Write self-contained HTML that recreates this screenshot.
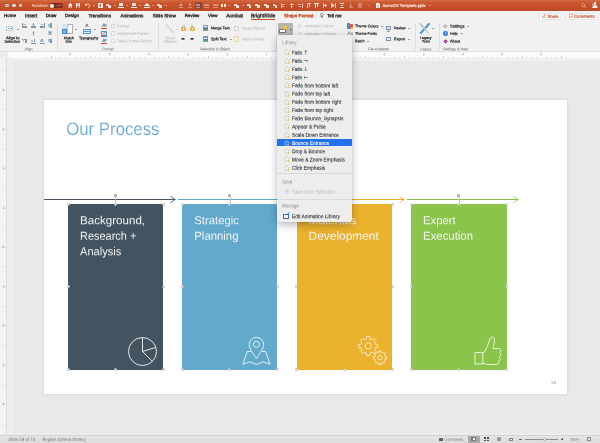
<!DOCTYPE html>
<html><head><meta charset="utf-8"><title>PowerPoint</title>
<style>
html,body{margin:0;padding:0;}
body{width:600px;height:443px;overflow:hidden;position:relative;background:#e7e7e7;font-family:"Liberation Sans",sans-serif;}
.tx{position:absolute;overflow:visible;will-change:transform;text-rendering:geometricPrecision;font-family:"Liberation Sans",sans-serif;}
.tx text{white-space:pre;}
.r{position:absolute;display:block;box-sizing:border-box;}
</style></head><body>
<div class="r" style="left:0.00px;top:0.00px;width:600.00px;height:10.60px;background:linear-gradient(#d46c44 0%,#ca552d 28%,#be4927 100%);"></div>
<div class="r" style="left:0.00px;top:10.60px;width:600.00px;height:40.80px;background:#f1f1f1;"></div>
<div class="r" style="left:0.00px;top:10.60px;width:600.00px;height:1.00px;background:#f8f8f8;"></div>
<div class="r" style="left:0.00px;top:51.10px;width:600.00px;height:0.70px;background:#e0e0e0;"></div>
<div class="r" style="left:0.00px;top:51.80px;width:600.00px;height:6.20px;background:#ededed;"></div>
<div class="r" style="left:7.80px;top:52.40px;width:592.20px;height:5.60px;background:#fbfbfb;"></div>
<div class="r" style="left:0.00px;top:58.00px;width:7.20px;height:376.00px;background:#f3f3f3;border-right:0.5px solid #dcdcdc;"></div>
<div class="r" style="left:7.20px;top:58.00px;width:592.80px;height:377.00px;background:#e9e9e9;"></div>
<div class="r" style="left:7.20px;top:58.00px;width:592.80px;height:2.60px;background:#f0f0f0;"></div>
<div class="r" style="left:7.20px;top:57.60px;width:6.20px;height:376.40px;background:#eeeeee;"></div>
<div class="r" style="left:0.00px;top:435.00px;width:600.00px;height:8.00px;background:linear-gradient(#e6e6e6,#dadada);border-top:0.6px solid #d2d2d2;"></div>
<div class="r" style="left:5.00px;top:3.60px;width:3.80px;height:3.80px;background:#dbe4ee;border-radius:38%;opacity:.92;"></div>
<div class="r" style="left:11.90px;top:3.60px;width:3.80px;height:3.80px;background:#d9e6e4;border-radius:38%;opacity:.92;"></div>
<div class="r" style="left:18.50px;top:3.60px;width:3.80px;height:3.80px;background:#d9e3ee;border-radius:38%;opacity:.92;"></div>
<div class="r" style="left:6.20px;top:4.80px;width:1.40px;height:1.40px;background:#6f8fb5;border-radius:50%;opacity:.8;"></div>
<svg class="tx" style="left:29px;top:0px" width="23" height="11"><text transform="translate(2.70 6.79) rotate(.05)" font-size="3.83" fill="#f7d6c9" stroke="#f7d6c9" stroke-width="0.08">AutoSave</text></svg>
<div class="r" style="left:50.00px;top:3.20px;width:13.30px;height:4.60px;background:#7d2a18;border-radius:2.3px;"></div>
<div class="r" style="left:50.40px;top:3.50px;width:4.00px;height:4.00px;background:#fff;border-radius:50%;"></div>
<svg class="tx" style="left:54px;top:1px" width="11" height="9"><text transform="translate(2.60 5.38) rotate(.05)" font-size="2.50" fill="#d9a493">OFF</text></svg>
<svg class="r" style="left:68.30px;top:3.00px;" width="4.40" height="4.80" viewBox="0 0 44 48"><path d="M22 0 L44 20 L38 20 L38 48 L27 48 L27 30 L17 30 L17 48 L6 48 L6 20 L0 20Z" fill="#fff"/></svg>
<svg class="r" style="left:75.80px;top:3.20px;" width="4.40" height="4.60" viewBox="0 0 44 46"><path d="M0 0H36L44 8V46H0Z M8 4V16H32V4Z M10 28V42H34V28Z" fill="#fff" fill-rule="evenodd"/></svg>
<svg class="r" style="left:84.80px;top:3.00px;" width="5.60" height="5.00" viewBox="0 0 56 50"><path d="M2 4V26H24Z" fill="#fdeee8"/><path d="M10 20C20 8 40 8 46 22C50 34 42 44 30 46" fill="none" stroke="#fdeee8" stroke-width="8"/></svg>
<div class="r" style="left:92.55px;top:5.42px;width:0;height:0;border-left:0.75px solid transparent;border-right:0.75px solid transparent;border-top:0.90px solid #f6d2c6;"></div>
<div class="r" style="left:97.50px;top:3.20px;width:5.00px;height:4.80px;background:#fdeee8;opacity:1.0;border-radius:.6px;"></div>
<div class="r" style="left:99.60px;top:4.20px;width:0.80px;height:2.80px;background:#c4532f;"></div>
<div class="r" style="left:98.60px;top:5.20px;width:2.80px;height:0.80px;background:#c4532f;"></div>
<div class="r" style="left:106.00px;top:3.50px;width:3.34px;height:2.70px;background:#fdeee8;opacity:0.92;border-radius:.5px;"></div>
<div class="r" style="left:108.28px;top:5.30px;width:3.22px;height:2.50px;background:#fdeee8;opacity:0.92;border-radius:.5px;"></div>
<div class="r" style="left:113.95px;top:5.42px;width:0;height:0;border-left:0.75px solid transparent;border-right:0.75px solid transparent;border-top:0.90px solid #f6d2c6;"></div>
<div class="r" style="left:119.30px;top:3.20px;width:3.90px;height:2.80px;background:#fdeee8;opacity:1.0;border-radius:1px 1px 0 0;"></div>
<div class="r" style="left:118.30px;top:6.80px;width:5.90px;height:1.20px;background:#fdeee8;opacity:1.0;"></div>
<div class="r" style="left:126.25px;top:5.42px;width:0;height:0;border-left:0.75px solid transparent;border-right:0.75px solid transparent;border-top:0.90px solid #f6d2c6;"></div>
<div class="r" style="left:131.80px;top:3.20px;width:3.90px;height:2.80px;background:#fdeee8;opacity:0.95;border-radius:1px 1px 0 0;"></div>
<div class="r" style="left:130.80px;top:6.80px;width:5.90px;height:1.20px;background:#fdeee8;opacity:0.95;"></div>
<div class="r" style="left:139.25px;top:5.42px;width:0;height:0;border-left:0.75px solid transparent;border-right:0.75px solid transparent;border-top:0.90px solid #f6d2c6;"></div>
<div class="r" style="left:144px;top:3.2px;width:0;height:0;border-left:3.0px solid transparent;border-right:3.0px solid transparent;border-bottom:3.8px solid #fff;opacity:1.0;"></div>
<div class="r" style="left:144.00px;top:7.00px;width:6.00px;height:1.00px;background:#fdeee8;opacity:1.0;"></div>
<div class="r" style="left:152.25px;top:5.42px;width:0;height:0;border-left:0.75px solid transparent;border-right:0.75px solid transparent;border-top:0.90px solid #f6d2c6;"></div>
<div class="r" style="left:156.90px;top:3.50px;width:3.28px;height:2.70px;background:#fdeee8;opacity:0.92;border-radius:.5px;"></div>
<div class="r" style="left:159.14px;top:5.30px;width:3.16px;height:2.50px;background:#fdeee8;opacity:0.92;border-radius:.5px;"></div>
<div class="r" style="left:165.05px;top:5.42px;width:0;height:0;border-left:0.75px solid transparent;border-right:0.75px solid transparent;border-top:0.90px solid #f6d2c6;"></div>
<div class="r" style="left:179px;top:3.2px;width:0;height:0;border-left:2.1500000000000057px solid transparent;border-right:2.1500000000000057px solid transparent;border-bottom:3.8px solid #fff;opacity:0.45;"></div>
<div class="r" style="left:179.00px;top:7.00px;width:4.30px;height:1.00px;background:#fdeee8;opacity:0.45;"></div>
<div class="r" style="left:188.50px;top:3.20px;width:2.20px;height:2.80px;background:#fdeee8;opacity:0.4;border-radius:1px 1px 0 0;"></div>
<div class="r" style="left:187.50px;top:6.80px;width:4.20px;height:1.20px;background:#fdeee8;opacity:0.4;"></div>
<div class="r" style="left:194.70px;top:1.70px;width:7.00px;height:6.90px;background:#87483a;border-radius:.6px;"></div>
<div class="r" style="left:196.00px;top:3.50px;width:4.40px;height:0.80px;background:#fdeee8;opacity:0.45;"></div>
<div class="r" style="left:196.00px;top:5.20px;width:4.40px;height:0.80px;background:#fdeee8;opacity:0.45;"></div>
<div class="r" style="left:196.00px;top:6.90px;width:4.40px;height:0.80px;background:#fdeee8;opacity:0.45;"></div>
<div class="r" style="left:204.00px;top:3.50px;width:5.00px;height:0.80px;background:#fdeee8;opacity:0.4;"></div>
<div class="r" style="left:204.00px;top:5.20px;width:5.00px;height:0.80px;background:#fdeee8;opacity:0.4;"></div>
<div class="r" style="left:204.00px;top:6.90px;width:5.00px;height:0.80px;background:#fdeee8;opacity:0.4;"></div>
<div class="r" style="left:212.50px;top:3.50px;width:5.00px;height:0.80px;background:#fdeee8;opacity:0.4;"></div>
<div class="r" style="left:212.50px;top:5.20px;width:5.00px;height:0.80px;background:#fdeee8;opacity:0.4;"></div>
<div class="r" style="left:212.50px;top:6.90px;width:5.00px;height:0.80px;background:#fdeee8;opacity:0.4;"></div>
<div class="r" style="left:220.80px;top:4.00px;width:2.10px;height:3.20px;background:#fdeee8;"></div>
<div class="r" style="left:223.70px;top:4.00px;width:2.10px;height:3.20px;background:#fdeee8;"></div>
<div class="r" style="left:228.25px;top:5.42px;width:0;height:0;border-left:0.75px solid transparent;border-right:0.75px solid transparent;border-top:0.90px solid #f6d2c6;"></div>
<div class="r" style="left:234.20px;top:3.50px;width:2.80px;height:2.70px;background:#fdeee8;opacity:0.92;border-radius:.5px;"></div>
<div class="r" style="left:236.10px;top:5.30px;width:2.70px;height:2.50px;background:#fdeee8;opacity:0.92;border-radius:.5px;"></div>
<div class="r" style="left:241.75px;top:5.42px;width:0;height:0;border-left:0.75px solid transparent;border-right:0.75px solid transparent;border-top:0.90px solid #f6d2c6;"></div>
<div class="r" style="left:246.90px;top:3.50px;width:2.80px;height:2.70px;background:#fdeee8;opacity:0.92;border-radius:.5px;"></div>
<div class="r" style="left:248.80px;top:5.30px;width:2.70px;height:2.50px;background:#fdeee8;opacity:0.92;border-radius:.5px;"></div>
<div class="r" style="left:255.20px;top:3.50px;width:2.80px;height:2.70px;background:#fdeee8;opacity:0.92;border-radius:.5px;"></div>
<div class="r" style="left:257.10px;top:5.30px;width:2.70px;height:2.50px;background:#fdeee8;opacity:0.92;border-radius:.5px;"></div>
<div class="r" style="left:263.70px;top:3.50px;width:2.98px;height:2.70px;background:#fdeee8;opacity:0.92;border-radius:.5px;"></div>
<div class="r" style="left:265.73px;top:5.30px;width:2.87px;height:2.50px;background:#fdeee8;opacity:0.92;border-radius:.5px;"></div>
<div class="r" style="left:272.70px;top:3.50px;width:2.80px;height:2.70px;background:#fdeee8;opacity:0.92;border-radius:.5px;"></div>
<div class="r" style="left:274.60px;top:5.30px;width:2.70px;height:2.50px;background:#fdeee8;opacity:0.92;border-radius:.5px;"></div>
<div class="r" style="left:281.00px;top:3.30px;width:0.70px;height:4.60px;background:#fdeee8;opacity:0.6;"></div>
<div class="r" style="left:282.10px;top:3.90px;width:3.10px;height:1.30px;background:#fdeee8;opacity:0.6;"></div>
<div class="r" style="left:282.10px;top:6.00px;width:1.90px;height:1.30px;background:#fdeee8;opacity:0.6;"></div>
<div class="r" style="left:291.45px;top:3.30px;width:0.70px;height:4.60px;background:#fdeee8;opacity:0.6;"></div>
<div class="r" style="left:289.60px;top:3.90px;width:4.40px;height:1.30px;background:#fdeee8;opacity:0.6;"></div>
<div class="r" style="left:290.50px;top:6.00px;width:2.60px;height:1.30px;background:#fdeee8;opacity:0.6;"></div>
<div class="r" style="left:301.50px;top:3.30px;width:0.70px;height:4.60px;background:#fdeee8;opacity:0.65;"></div>
<div class="r" style="left:298.00px;top:3.90px;width:3.10px;height:1.30px;background:#fdeee8;opacity:0.65;"></div>
<div class="r" style="left:299.20px;top:6.00px;width:1.90px;height:1.30px;background:#fdeee8;opacity:0.65;"></div>
<div class="r" style="left:306.50px;top:3.30px;width:4.50px;height:0.70px;background:#fdeee8;opacity:0.7;"></div>
<div class="r" style="left:307.00px;top:4.40px;width:1.30px;height:3.50px;background:#fdeee8;opacity:0.7;"></div>
<div class="r" style="left:309.20px;top:4.40px;width:1.30px;height:2.20px;background:#fdeee8;opacity:0.7;"></div>
<div class="r" style="left:314.00px;top:3.30px;width:5.00px;height:0.70px;background:#fdeee8;opacity:0.9;"></div>
<div class="r" style="left:314.50px;top:4.40px;width:1.30px;height:3.50px;background:#fdeee8;opacity:0.9;"></div>
<div class="r" style="left:317.20px;top:4.40px;width:1.30px;height:2.20px;background:#fdeee8;opacity:0.9;"></div>
<div class="r" style="left:322.50px;top:5.25px;width:4.50px;height:0.70px;background:#fdeee8;opacity:0.75;"></div>
<div class="r" style="left:323.00px;top:3.30px;width:1.30px;height:4.60px;background:#fdeee8;opacity:0.75;"></div>
<div class="r" style="left:325.20px;top:4.20px;width:1.30px;height:2.80px;background:#fdeee8;opacity:0.75;"></div>
<div class="r" style="left:331.00px;top:3.30px;width:0.60px;height:4.60px;background:#fdeee8;opacity:0.75;"></div>
<div class="r" style="left:334.80px;top:3.30px;width:0.60px;height:4.60px;background:#fdeee8;opacity:0.75;"></div>
<div class="r" style="left:332.40px;top:4.10px;width:1.60px;height:3.00px;background:#fdeee8;opacity:0.75;"></div>
<div class="r" style="left:339.80px;top:3.30px;width:4.40px;height:0.60px;background:#fdeee8;opacity:0.85;"></div>
<div class="r" style="left:339.80px;top:7.30px;width:4.40px;height:0.60px;background:#fdeee8;opacity:0.85;"></div>
<div class="r" style="left:340.60px;top:4.80px;width:2.80px;height:1.60px;background:#fdeee8;opacity:0.85;"></div>
<div class="r" style="left:349.00px;top:7.20px;width:4.00px;height:0.70px;background:#fdeee8;opacity:0.35;"></div>
<div class="r" style="left:349.50px;top:3.30px;width:1.30px;height:3.50px;background:#fdeee8;opacity:0.35;"></div>
<div class="r" style="left:351.20px;top:4.60px;width:1.30px;height:2.20px;background:#fdeee8;opacity:0.35;"></div>
<div class="r" style="left:357.50px;top:3.20px;width:4.20px;height:4.80px;background:#fdeee8;opacity:.3;"></div>
<div class="r" style="left:367.60px;top:5.20px;width:1.40px;height:1.20px;background:#f6d2c6;border-radius:50%;"></div>
<svg class="r" style="left:375.80px;top:2.60px;" width="4.20" height="5.60" viewBox="0 0 42 56"><path d="M0 0H28L42 14V56H0Z" fill="#fff"/><path d="M9 26H33M9 36H33M9 46H33" stroke="#c4532f" stroke-width="4"/></svg>
<svg class="tx" style="left:380px;top:0px" width="50" height="11"><text transform="translate(2.50 6.89) rotate(.05)" font-size="4.17" fill="#fdece5" stroke="#fdece5" stroke-width="0.16">AcmeSX Template.pptx</text></svg>
<div class="r" style="left:429.25px;top:5.42px;width:0;height:0;border-left:0.75px solid transparent;border-right:0.75px solid transparent;border-top:0.90px solid #f6d2c6;"></div>
<svg class="r" style="left:580.60px;top:2.80px;" width="5.40" height="5.40" viewBox="0 0 54 54"><circle cx="22" cy="22" r="16" fill="none" stroke="#f3c4b4" stroke-width="6"/><path d="M34 34L52 52" stroke="#f3c4b4" stroke-width="7"/></svg>
<svg class="r" style="left:592.00px;top:2.40px;" width="5.60" height="6.00" viewBox="0 0 56 60"><circle cx="30" cy="14" r="13" fill="#fff"/><path d="M4 60C4 38 16 30 30 30C44 30 56 38 56 60Z" fill="#fff"/><path d="M0 18L12 26L0 34Z" fill="#fff"/></svg>
<svg class="tx" style="left:2px;top:10px" width="19" height="12"><text transform="translate(2.00 7.09) rotate(.05)" font-size="4.50" fill="#2b2b2b" stroke="#2b2b2b" stroke-width="0.32">Home</text></svg>
<svg class="tx" style="left:23px;top:10px" width="19" height="12"><text transform="translate(2.00 7.24) rotate(.05)" font-size="4.96" fill="#2b2b2b" stroke="#2b2b2b" stroke-width="0.32">Insert</text></svg>
<svg class="tx" style="left:43px;top:10px" width="17" height="12"><text transform="translate(2.80 7.11) rotate(.05)" font-size="4.54" fill="#2b2b2b" stroke="#2b2b2b" stroke-width="0.32">Draw</text></svg>
<svg class="tx" style="left:63px;top:10px" width="20" height="12"><text transform="translate(2.00 7.09) rotate(.05)" font-size="4.50" fill="#2b2b2b" stroke="#2b2b2b" stroke-width="0.32">Design</text></svg>
<svg class="tx" style="left:86px;top:10px" width="29" height="12"><text transform="translate(2.40 7.14) rotate(.05)" font-size="4.66" fill="#2b2b2b" stroke="#2b2b2b" stroke-width="0.32">Transitions</text></svg>
<svg class="tx" style="left:118px;top:10px" width="29" height="12"><text transform="translate(2.50 7.14) rotate(.05)" font-size="4.63" fill="#2b2b2b" stroke="#2b2b2b" stroke-width="0.32">Animations</text></svg>
<svg class="tx" style="left:150px;top:10px" width="30" height="12"><text transform="translate(2.70 7.13) rotate(.05)" font-size="4.62" fill="#2b2b2b" stroke="#2b2b2b" stroke-width="0.32">Slide Show</text></svg>
<svg class="tx" style="left:182px;top:10px" width="21" height="12"><text transform="translate(2.70 7.09) rotate(.05)" font-size="4.48" fill="#2b2b2b" stroke="#2b2b2b" stroke-width="0.32">Review</text></svg>
<svg class="tx" style="left:206px;top:10px" width="16" height="12"><text transform="translate(2.00 7.04) rotate(.05)" font-size="4.33" fill="#2b2b2b" stroke="#2b2b2b" stroke-width="0.32">View</text></svg>
<svg class="tx" style="left:224px;top:10px" width="23" height="12"><text transform="translate(2.20 7.21) rotate(.05)" font-size="4.87" fill="#2b2b2b" stroke="#2b2b2b" stroke-width="0.32">Acrobat</text></svg>
<svg class="tx" style="left:249px;top:10px" width="31" height="13"><text transform="translate(2.00 7.26) rotate(.05)" font-size="5.02" fill="#2b2b2b" stroke="#2b2b2b" stroke-width="0.32">BrightSlide</text></svg>
<div class="r" style="left:251.00px;top:19.00px;width:24.30px;height:1.00px;background:#c8502c;"></div>
<svg class="tx" style="left:282px;top:10px" width="36" height="12"><text transform="translate(2.00 7.13) rotate(.05)" font-size="4.62" fill="#c4502c" stroke="#c4502c" stroke-width="0.32">Shape Format</text></svg>
<svg class="r" style="left:320.00px;top:12.80px;" width="3.60" height="5.40" viewBox="0 0 36 54"><circle cx="18" cy="17" r="14" fill="none" stroke="#444" stroke-width="5"/><path d="M11 30V42H25V30M12 50H24" fill="none" stroke="#444" stroke-width="5"/></svg>
<svg class="tx" style="left:325px;top:10px" width="21" height="12"><text transform="translate(2.00 7.14) rotate(.05)" font-size="4.64" fill="#2b2b2b" stroke="#2b2b2b" stroke-width="0.32">Tell me</text></svg>
<div class="r" style="left:539.20px;top:13.00px;width:21.40px;height:7.00px;background:#fbfbfb;border-radius:1.3px;border:.4px solid #e6e6e6;"></div>
<svg class="r" style="left:542.40px;top:14.40px;" width="3.60" height="4.00" viewBox="0 0 36 40"><path d="M4 18V38H30V24M14 26C14 14 22 8 32 8M24 0L34 8L24 16" fill="none" stroke="#c4502c" stroke-width="5"/></svg>
<svg class="tx" style="left:545px;top:11px" width="18" height="11"><text transform="translate(2.50 6.79) rotate(.05)" font-size="4.16" fill="#c4502c" stroke="#c4502c" stroke-width="0.2">Share</text></svg>
<div class="r" style="left:565.60px;top:13.00px;width:31.70px;height:7.00px;background:#fbfbfb;border-radius:1.3px;border:.4px solid #e6e6e6;"></div>
<svg class="r" style="left:568.60px;top:14.20px;" width="4.00" height="4.20" viewBox="0 0 40 42"><path d="M3 3H37V28H18L10 38V28H3Z" fill="none" stroke="#c4502c" stroke-width="5"/></svg>
<svg class="tx" style="left:572px;top:11px" width="27" height="11"><text transform="translate(2.00 6.82) rotate(.05)" font-size="4.26" fill="#c4502c" stroke="#c4502c" stroke-width="0.2">Comments</text></svg>
<div class="r" style="left:6.30px;top:26.20px;width:6.90px;height:4.60px;background:#fff;border:.4px solid #c9c9c9;border-radius:.5px;"></div>
<div class="r" style="left:7.60px;top:27.60px;width:1.90px;height:1.90px;background:#3f8fe0;"></div>
<div class="r" style="left:10.10px;top:27.60px;width:1.90px;height:1.90px;background:#3f8fe0;"></div>
<div class="r" style="left:17.20px;top:28.60px;width:0;height:0;border-left:0.80px solid transparent;border-right:0.80px solid transparent;border-top:0.96px solid #444;"></div>
<svg class="tx" style="left:4px;top:33px" width="20" height="11"><text transform="translate(2.00 6.25) rotate(.05)" font-size="4.05" fill="#2b2b2b" stroke="#2b2b2b" stroke-width="0.22">Align to</text></svg>
<svg class="tx" style="left:2px;top:36px" width="22" height="11"><text transform="translate(2.50 6.67) rotate(.05)" font-size="3.77" fill="#2b2b2b" stroke="#2b2b2b" stroke-width="0.22">Selection</text></svg>
<div class="r" style="left:22.31px;top:23.14px;width:0.53px;height:4.93px;background:#8d959d;"></div>
<div class="r" style="left:23.19px;top:23.66px;width:2.46px;height:1.58px;background:#9cc3e8;"></div>
<div class="r" style="left:23.19px;top:25.95px;width:3.70px;height:1.58px;background:#8d959d;"></div>
<div class="r" style="left:33.04px;top:23.14px;width:0.53px;height:4.93px;background:#8d959d;"></div>
<div class="r" style="left:31.89px;top:23.84px;width:2.82px;height:1.41px;background:#9cc3e8;"></div>
<div class="r" style="left:31.01px;top:25.95px;width:4.58px;height:1.58px;background:#8d959d;"></div>
<div class="r" style="left:43.96px;top:23.14px;width:0.53px;height:4.93px;background:#8d959d;"></div>
<div class="r" style="left:41.14px;top:23.66px;width:2.46px;height:1.58px;background:#9cc3e8;"></div>
<div class="r" style="left:39.91px;top:25.95px;width:3.70px;height:1.58px;background:#8d959d;"></div>
<div class="r" style="left:47.54px;top:25.34px;width:4.93px;height:0.53px;background:#8d959d;"></div>
<div class="r" style="left:48.24px;top:24.02px;width:1.50px;height:3.17px;background:#9cc3e8;"></div>
<div class="r" style="left:50.35px;top:23.31px;width:1.58px;height:4.58px;background:#8d959d;"></div>
<div class="r" style="left:32.07px;top:31.97px;width:2.46px;height:2.46px;background:transparent;border:.6px solid #9cc3e8;border-radius:50%;"></div>
<div class="r" style="left:33.04px;top:30.74px;width:0.53px;height:4.93px;background:#8d959d;opacity:.6;"></div>
<div class="r" style="left:47.71px;top:30.91px;width:1.94px;height:1.94px;background:#9cc3e8;"></div>
<div class="r" style="left:50.35px;top:30.91px;width:1.94px;height:1.94px;background:#9cc3e8;"></div>
<div class="r" style="left:47.71px;top:33.55px;width:1.94px;height:1.94px;background:#9cc3e8;"></div>
<div class="r" style="left:50.35px;top:33.55px;width:1.94px;height:1.94px;background:#9cc3e8;"></div>
<div class="r" style="left:48.94px;top:32.14px;width:2.11px;height:2.11px;background:#8d959d;"></div>
<div class="r" style="left:22.14px;top:38.51px;width:4.93px;height:0.53px;background:#8d959d;"></div>
<div class="r" style="left:22.66px;top:39.39px;width:1.58px;height:2.46px;background:#9cc3e8;"></div>
<div class="r" style="left:24.95px;top:39.39px;width:1.58px;height:3.70px;background:#8d959d;"></div>
<div class="r" style="left:30.84px;top:42.56px;width:4.93px;height:0.53px;background:#8d959d;"></div>
<div class="r" style="left:31.36px;top:39.74px;width:1.58px;height:2.46px;background:#9cc3e8;"></div>
<div class="r" style="left:33.65px;top:38.51px;width:1.58px;height:3.70px;background:#8d959d;"></div>
<div class="r" style="left:39.74px;top:42.56px;width:4.93px;height:0.53px;background:#8d959d;"></div>
<div class="r" style="left:41.14px;top:38.69px;width:2.11px;height:3.52px;background:#8d959d;"></div>
<div class="r" style="left:40.09px;top:40.45px;width:4.22px;height:1.76px;background:#9cc3e8;opacity:.8;"></div>
<div class="r" style="left:47.54px;top:38.51px;width:4.93px;height:0.53px;background:#8d959d;"></div>
<div class="r" style="left:48.06px;top:39.39px;width:1.58px;height:2.46px;background:#9cc3e8;"></div>
<div class="r" style="left:50.35px;top:39.39px;width:1.58px;height:3.70px;background:#8d959d;"></div>
<svg class="tx" style="left:22px;top:44px" width="14" height="11"><text transform="translate(2.50 6.32) rotate(.05)" font-size="3.60" fill="#7a7a7a" stroke="#7a7a7a" stroke-width="0.08">Align</text></svg>
<div class="r" style="left:57.25px;top:23.00px;width:0.50px;height:26.50px;background:#dedede;"></div>
<div class="r" style="left:61.80px;top:23.50px;width:11.20px;height:10.50px;background:#fbfbfb;border:.5px solid #a9aeb4;border-radius:.4px;"></div>
<div class="r" style="left:61.80px;top:28.60px;width:5.60px;height:5.40px;background:#4d9ae6;border:.4px solid #3b82cf;"></div>
<div class="r" style="left:63.20px;top:30.00px;width:2.80px;height:2.60px;background:#7fb6ee;"></div>
<div class="r" style="left:62.30px;top:24.00px;width:5.10px;height:4.60px;background:#d3e5f8;"></div>
<div class="r" style="left:67.40px;top:24.00px;width:0.50px;height:9.50px;background:#b9c4cf;"></div>
<div class="r" style="left:74.70px;top:28.60px;width:0;height:0;border-left:0.80px solid transparent;border-right:0.80px solid transparent;border-top:0.96px solid #444;"></div>
<svg class="tx" style="left:61px;top:33px" width="17" height="11"><text transform="translate(2.80 6.16) rotate(.05)" font-size="3.75" fill="#2b2b2b" stroke="#2b2b2b" stroke-width="0.22">Match</text></svg>
<svg class="tx" style="left:63px;top:37px" width="13" height="10"><text transform="translate(2.50 5.50) rotate(.05)" font-size="3.24" fill="#2b2b2b" stroke="#2b2b2b" stroke-width="0.22">Size</text></svg>
<svg class="tx" style="left:83px;top:20px" width="10" height="12"><text transform="translate(2.20 6.89) rotate(.05)" font-size="4.80" fill="#444" stroke="#444" stroke-width="0.1">A</text></svg>
<div class="r" style="left:83.00px;top:28.50px;width:8.00px;height:5.00px;background:#dcebfa;border:.5px solid #5b9bd9;"></div>
<div class="r" style="left:84.30px;top:30.60px;width:5.40px;height:0.80px;background:#5b9bd9;"></div>
<div class="r" style="left:94.20px;top:28.60px;width:0;height:0;border-left:0.80px solid transparent;border-right:0.80px solid transparent;border-top:0.96px solid #444;"></div>
<svg class="tx" style="left:77px;top:33px" width="26" height="11"><text transform="translate(2.00 6.16) rotate(.05)" font-size="3.73" fill="#2b2b2b" stroke="#2b2b2b" stroke-width="0.22">Typography</text></svg>
<svg class="tx" style="left:99px;top:19px" width="10" height="13"><text transform="translate(2.90 7.93) rotate(.05)" font-size="5.26" fill="#5a6470" font-weight="700">A</text></svg>
<div class="r" style="left:100.80px;top:27.90px;width:6.00px;height:1.20px;background:#d94c3d;"></div>
<div class="r" style="left:104.60px;top:23.60px;width:2.20px;height:2.20px;background:#5b9bd9;border-radius:50%;opacity:.85;"></div>
<svg class="tx" style="left:99px;top:34px" width="10" height="13"><text transform="translate(2.90 8.13) rotate(.05)" font-size="5.26" fill="#5a6470" font-weight="700">A</text></svg>
<div class="r" style="left:100.80px;top:43.10px;width:6.00px;height:1.20px;background:#d94c3d;"></div>
<div class="r" style="left:104.60px;top:38.80px;width:2.20px;height:2.20px;background:#5b9bd9;border-radius:50%;opacity:.85;"></div>
<div class="r" style="left:100.80px;top:31.20px;width:5.80px;height:5.60px;background:#cfe4f7;border:.5px solid #4f93d6;"></div>
<div class="r" style="left:102.00px;top:35.00px;width:4.00px;height:1.20px;background:#d94c3d;"></div>
<div class="r" style="left:102.60px;top:32.40px;width:4.20px;height:1.20px;background:#e0893a;transform:rotate(-42deg);"></div>
<div class="r" style="left:111.00px;top:23.90px;width:4.00px;height:4.60px;background:#f6f6f6;border:.4px solid #d9d9d9;border-radius:.4px;"></div>
<div class="r" style="left:111.00px;top:31.30px;width:4.00px;height:4.60px;background:#f6f6f6;border:.4px solid #d9d9d9;border-radius:.4px;"></div>
<div class="r" style="left:111.00px;top:38.90px;width:4.00px;height:4.60px;background:#f6f6f6;border:.4px solid #d9d9d9;border-radius:.4px;"></div>
<div class="r" style="left:112.60px;top:23.20px;width:2.80px;height:1.40px;background:#efdcb6;transform:rotate(-40deg);"></div>
<svg class="tx" style="left:115px;top:21px" width="18" height="11"><text transform="translate(2.00 6.37) rotate(.05)" font-size="3.79" fill="#ababab">Format</text></svg>
<svg class="tx" style="left:115px;top:28px" width="38" height="11"><text transform="translate(2.00 6.67) rotate(.05)" font-size="3.79" fill="#ababab">Adjustment Painter</text></svg>
<svg class="tx" style="left:115px;top:36px" width="41" height="11"><text transform="translate(2.00 6.17) rotate(.05)" font-size="3.77" fill="#ababab">Table Format Painter</text></svg>
<svg class="tx" style="left:100px;top:44px" width="18" height="11"><text transform="translate(2.00 6.33) rotate(.05)" font-size="3.63" fill="#7a7a7a" stroke="#7a7a7a" stroke-width="0.08">Format</text></svg>
<div class="r" style="left:157.75px;top:23.00px;width:0.50px;height:26.50px;background:#dedede;"></div>
<svg class="r" style="left:164.60px;top:23.80px;" width="9.40" height="9.60" viewBox="0 0 94 96"><path d="M14 10L84 88" stroke="#b4cfec" stroke-width="11" stroke-linecap="round"/><path d="M8 4L34 34" stroke="#dadada" stroke-width="15" stroke-linecap="round"/></svg>
<div class="r" style="left:175.50px;top:28.60px;width:0;height:0;border-left:0.80px solid transparent;border-right:0.80px solid transparent;border-top:0.96px solid #aaa;"></div>
<svg class="tx" style="left:163px;top:33px" width="17" height="11"><text transform="translate(2.00 6.17) rotate(.05)" font-size="3.78" fill="#ababab">Select</text></svg>
<svg class="tx" style="left:161px;top:36px" width="19" height="11"><text transform="translate(2.80 6.66) rotate(.05)" font-size="3.75" fill="#ababab">Objects</text></svg>
<div class="r" style="left:180.80px;top:27.40px;width:4.80px;height:3.80px;background:#f2b445;border-radius:.6px;"></div>
<div class="r" style="left:181.80px;top:24.60px;width:2.80px;height:3.60px;background:transparent;border:.7px solid #b7b7b7;border-bottom:none;border-radius:1.5px 1.5px 0 0;"></div>
<div class="r" style="left:182.80px;top:28.40px;width:0.80px;height:1.60px;background:#fbe2b0;"></div>
<div class="r" style="left:189.80px;top:27.40px;width:4.80px;height:3.80px;background:#f2b445;border-radius:.6px;"></div>
<div class="r" style="left:190.60px;top:24.60px;width:2.80px;height:3.60px;background:transparent;border:.7px solid #b7b7b7;border-bottom:none;border-radius:1.5px 1.5px 0 0;"></div>
<div class="r" style="left:191.80px;top:28.40px;width:0.80px;height:1.60px;background:#fbe2b0;"></div>
<div class="r" style="left:180.60px;top:37.60px;width:4.80px;height:2.20px;background:#666;border-radius:50%;"></div>
<div class="r" style="left:182.20px;top:37.90px;width:1.60px;height:1.60px;background:#222;border-radius:50%;"></div>
<div class="r" style="left:189.60px;top:37.60px;width:4.80px;height:2.20px;background:#666;border-radius:50%;"></div>
<div class="r" style="left:191.20px;top:37.90px;width:1.60px;height:1.60px;background:#222;border-radius:50%;"></div>
<div class="r" style="left:203.00px;top:25.40px;width:5.40px;height:5.80px;background:#f7f7f7;border:.4px solid #8a99a8;"></div>
<div class="r" style="left:203.80px;top:26.60px;width:3.80px;height:0.70px;background:#5b9bd9;"></div>
<div class="r" style="left:203.80px;top:28.00px;width:3.80px;height:0.70px;background:#6b7785;"></div>
<div class="r" style="left:203.80px;top:29.40px;width:3.80px;height:0.70px;background:#5aa35a;"></div>
<svg class="tx" style="left:209px;top:23px" width="25" height="11"><text transform="translate(2.00 6.36) rotate(.05)" font-size="3.75" fill="#2b2b2b" stroke="#2b2b2b" stroke-width="0.22">Merge Text</text></svg>
<div class="r" style="left:203.00px;top:36.00px;width:5.40px;height:5.80px;background:#f7f7f7;border:.4px solid #8a99a8;"></div>
<div class="r" style="left:203.80px;top:37.20px;width:3.80px;height:0.70px;background:#5b9bd9;"></div>
<div class="r" style="left:203.80px;top:38.60px;width:3.80px;height:0.70px;background:#6b7785;"></div>
<div class="r" style="left:203.80px;top:40.00px;width:3.80px;height:0.70px;background:#5aa35a;"></div>
<svg class="tx" style="left:209px;top:34px" width="22" height="11"><text transform="translate(2.00 6.19) rotate(.05)" font-size="3.84" fill="#2b2b2b" stroke="#2b2b2b" stroke-width="0.22">Split Text</text></svg>
<div class="r" style="left:229.50px;top:38.90px;width:0;height:0;border-left:0.80px solid transparent;border-right:0.80px solid transparent;border-top:0.96px solid #444;"></div>
<div class="r" style="left:234.00px;top:25.80px;width:5.00px;height:5.20px;background:#f3f3f3;border:.4px solid #d6d6d6;"></div>
<svg class="tx" style="left:240px;top:23px" width="30" height="11"><text transform="translate(2.00 6.38) rotate(.05)" font-size="3.81" fill="#ababab">Swap Objects</text></svg>
<div class="r" style="left:234.00px;top:36.40px;width:5.00px;height:5.20px;background:#f6eedc;border:.4px solid #e2d6bb;"></div>
<svg class="tx" style="left:240px;top:34px" width="28" height="11"><text transform="translate(2.00 6.15) rotate(.05)" font-size="3.70" fill="#ababab">Add to Group</text></svg>
<svg class="tx" style="left:198px;top:44px" width="36" height="11"><text transform="translate(2.00 6.33) rotate(.05)" font-size="3.65" fill="#7a7a7a" stroke="#7a7a7a" stroke-width="0.08">Selection &amp; Object</text></svg>
<div class="r" style="left:276.05px;top:23.00px;width:0.50px;height:26.50px;background:#dedede;"></div>
<div class="r" style="left:277.50px;top:22.80px;width:15.50px;height:12.00px;background:#b5b5b5;border-radius:.6px;"></div>
<div class="r" style="left:279.00px;top:28.80px;width:7.00px;height:4.60px;background:#fdfdfd;border:.4px solid #777;"></div>
<svg class="r" style="left:281.60px;top:23.60px;" width="6.40" height="6.40" viewBox="0 0 64 64"><path d="M32 2L41 22L62 25L46 40L51 62L32 50L13 62L18 40L2 25L23 22Z" fill="#f7c948" stroke="#d99a1c" stroke-width="4"/></svg>
<div class="r" style="left:290.00px;top:28.60px;width:0;height:0;border-left:0.80px solid transparent;border-right:0.80px solid transparent;border-top:0.96px solid #333;"></div>
<div class="r" style="left:297.60px;top:24.00px;width:3.00px;height:3.60px;background:#f1ead8;border:.3px solid #ddd;"></div>
<svg class="tx" style="left:302px;top:21px" width="36" height="11"><text transform="translate(2.70 6.15) rotate(.05)" font-size="3.71" fill="#ababab">Animation Painter</text></svg>
<div class="r" style="left:297.60px;top:32.00px;width:3.00px;height:3.40px;background:#ebebeb;border:.3px solid #ddd;"></div>
<svg class="tx" style="left:302px;top:29px" width="38" height="11"><text transform="translate(2.70 5.96) rotate(.05)" font-size="3.73" fill="#ababab">Animation Painters</text></svg>
<div class="r" style="left:347.00px;top:23.20px;width:3.20px;height:5.80px;background:#3f8fe0;border-radius:.6px;"></div>
<div class="r" style="left:349.80px;top:24.00px;width:3.20px;height:5.00px;background:#e4573f;border-radius:.6px;"></div>
<div class="r" style="left:350.60px;top:26.60px;width:2.40px;height:2.40px;background:#f2b632;border-radius:.5px;"></div>
<svg class="tx" style="left:353px;top:21px" width="30" height="11"><text transform="translate(2.00 6.36) rotate(.05)" font-size="3.74" fill="#2b2b2b" stroke="#2b2b2b" stroke-width="0.22">Theme Colors</text></svg>
<div class="r" style="left:381.20px;top:26.10px;width:0;height:0;border-left:0.80px solid transparent;border-right:0.80px solid transparent;border-top:0.96px solid #444;"></div>
<svg class="tx" style="left:345px;top:28px" width="12" height="12"><text transform="translate(2.40 6.82) rotate(.05)" font-size="4.58" fill="#777" stroke="#777" stroke-width="0.1">Aa</text></svg>
<svg class="tx" style="left:353px;top:28px" width="28" height="11"><text transform="translate(2.00 6.66) rotate(.05)" font-size="3.73" fill="#2b2b2b" stroke="#2b2b2b" stroke-width="0.22">Theme Fonts</text></svg>
<svg class="tx" style="left:353px;top:36px" width="16" height="11"><text transform="translate(2.00 6.15) rotate(.05)" font-size="3.72" fill="#2b2b2b" stroke="#2b2b2b" stroke-width="0.22">Batch</text></svg>
<div class="r" style="left:367.20px;top:40.90px;width:0;height:0;border-left:0.80px solid transparent;border-right:0.80px solid transparent;border-top:0.96px solid #444;"></div>
<div class="r" style="left:386.30px;top:25.50px;width:4.90px;height:4.10px;background:#e4eefa;border:.4px solid #7d93ad;"></div>
<div class="r" style="left:388.30px;top:29.60px;width:0.90px;height:1.20px;background:#8ea2b8;"></div>
<div class="r" style="left:387.40px;top:30.60px;width:2.70px;height:0.50px;background:#8ea2b8;"></div>
<svg class="tx" style="left:392px;top:23px" width="18" height="10"><text transform="translate(2.00 6.29) rotate(.05)" font-size="3.51" fill="#2b2b2b" stroke="#2b2b2b" stroke-width="0.22">Review</text></svg>
<div class="r" style="left:408.20px;top:28.10px;width:0;height:0;border-left:0.80px solid transparent;border-right:0.80px solid transparent;border-top:0.96px solid #444;"></div>
<div class="r" style="left:386.30px;top:36.60px;width:4.90px;height:4.00px;background:#e4eefa;border:.4px solid #7d93ad;"></div>
<svg class="tx" style="left:392px;top:34px" width="17" height="11"><text transform="translate(2.00 6.18) rotate(.05)" font-size="3.81" fill="#2b2b2b" stroke="#2b2b2b" stroke-width="0.22">Export</text></svg>
<div class="r" style="left:407.70px;top:38.90px;width:0;height:0;border-left:0.80px solid transparent;border-right:0.80px solid transparent;border-top:0.96px solid #444;"></div>
<svg class="tx" style="left:366px;top:44px" width="27" height="10"><text transform="translate(2.00 6.31) rotate(.05)" font-size="3.57" fill="#7a7a7a" stroke="#7a7a7a" stroke-width="0.08">File &amp; Master</text></svg>
<div class="r" style="left:414.75px;top:23.00px;width:0.50px;height:26.50px;background:#dedede;"></div>
<svg class="r" style="left:419.00px;top:23.00px;" width="11.40" height="11.20" viewBox="0 0 114 112"><path d="M100 10L18 100" stroke="#4a9be8" stroke-width="22" stroke-linecap="round"/><path d="M12 8L96 102" stroke="#c9ccd0" stroke-width="14" stroke-linecap="round"/><path d="M12 8L40 40" stroke="#9aa0a6" stroke-width="8" stroke-linecap="round"/></svg>
<div class="r" style="left:432.20px;top:28.20px;width:0;height:0;border-left:0.80px solid transparent;border-right:0.80px solid transparent;border-top:0.96px solid #444;"></div>
<svg class="tx" style="left:418px;top:33px" width="18" height="10"><text transform="translate(2.00 6.11) rotate(.05)" font-size="3.57" fill="#2b2b2b" stroke="#2b2b2b" stroke-width="0.22">Legacy</text></svg>
<svg class="tx" style="left:420px;top:37px" width="14" height="10"><text transform="translate(2.00 5.56) rotate(.05)" font-size="3.43" fill="#2b2b2b" stroke="#2b2b2b" stroke-width="0.22">Tools</text></svg>
<svg class="tx" style="left:418px;top:44px" width="17" height="10"><text transform="translate(2.50 6.26) rotate(.05)" font-size="3.41" fill="#7a7a7a" stroke="#7a7a7a" stroke-width="0.08">Legacy</text></svg>
<div class="r" style="left:438.75px;top:23.00px;width:0.50px;height:26.50px;background:#dedede;"></div>
<svg class="r" style="left:443.20px;top:23.80px;" width="4.60" height="4.60" viewBox="0 0 46 46"><circle cx="23" cy="23" r="15" fill="none" stroke="#8d8d8d" stroke-width="9" stroke-dasharray="7 4.8"/><circle cx="23" cy="23" r="12" fill="none" stroke="#8d8d8d" stroke-width="5"/></svg>
<svg class="tx" style="left:448px;top:21px" width="21" height="11"><text transform="translate(2.00 6.44) rotate(.05)" font-size="4.01" fill="#2b2b2b" stroke="#2b2b2b" stroke-width="0.22">Settings</text></svg>
<div class="r" style="left:466.70px;top:26.10px;width:0;height:0;border-left:0.80px solid transparent;border-right:0.80px solid transparent;border-top:0.96px solid #444;"></div>
<div class="r" style="left:443.30px;top:31.40px;width:4.40px;height:4.40px;background:#2f7fdb;border-radius:50%;"></div>
<svg class="tx" style="left:442px;top:29px" width="8" height="9"><text transform="translate(2.70 5.46) rotate(.05)" font-size="2.78" fill="#fff" font-weight="700">?</text></svg>
<svg class="tx" style="left:448px;top:28px" width="14" height="11"><text transform="translate(2.00 6.63) rotate(.05)" font-size="3.65" fill="#2b2b2b" stroke="#2b2b2b" stroke-width="0.22">Help</text></svg>
<div class="r" style="left:460.70px;top:33.40px;width:0;height:0;border-left:0.80px solid transparent;border-right:0.80px solid transparent;border-top:0.96px solid #444;"></div>
<div class="r" style="left:444.00px;top:39.60px;width:3.20px;height:3.20px;background:#8b2a7a;transform:rotate(45deg);"></div>
<div class="r" style="left:445.00px;top:40.60px;width:1.20px;height:1.20px;background:#f3d7ee;border-radius:50%;"></div>
<svg class="tx" style="left:448px;top:36px" width="16" height="11"><text transform="translate(2.00 6.39) rotate(.05)" font-size="3.83" fill="#2b2b2b" stroke="#2b2b2b" stroke-width="0.22">About</text></svg>
<svg class="tx" style="left:441px;top:44px" width="31" height="11"><text transform="translate(2.00 6.32) rotate(.05)" font-size="3.63" fill="#7a7a7a" stroke="#7a7a7a" stroke-width="0.08">Settings &amp; Help</text></svg>
<svg class="tx" style="left:67px;top:49px" width="8" height="10"><text transform="translate(2.50 6.19) rotate(.05)" font-size="3.20" fill="#7a7a7a">6</text></svg>
<svg class="tx" style="left:106px;top:49px" width="8" height="10"><text transform="translate(2.75 6.19) rotate(.05)" font-size="3.20" fill="#7a7a7a">5</text></svg>
<svg class="tx" style="left:145px;top:49px" width="8" height="10"><text transform="translate(3.00 6.19) rotate(.05)" font-size="3.20" fill="#7a7a7a">4</text></svg>
<svg class="tx" style="left:185px;top:49px" width="8" height="10"><text transform="translate(2.25 6.19) rotate(.05)" font-size="3.20" fill="#7a7a7a">3</text></svg>
<svg class="tx" style="left:224px;top:49px" width="8" height="10"><text transform="translate(2.50 6.19) rotate(.05)" font-size="3.20" fill="#7a7a7a">2</text></svg>
<svg class="tx" style="left:263px;top:49px" width="8" height="10"><text transform="translate(2.75 6.19) rotate(.05)" font-size="3.20" fill="#7a7a7a">1</text></svg>
<svg class="tx" style="left:303px;top:49px" width="8" height="10"><text transform="translate(2.00 6.19) rotate(.05)" font-size="3.20" fill="#7a7a7a">0</text></svg>
<svg class="tx" style="left:342px;top:49px" width="8" height="10"><text transform="translate(2.25 6.19) rotate(.05)" font-size="3.20" fill="#7a7a7a">1</text></svg>
<svg class="tx" style="left:381px;top:49px" width="8" height="10"><text transform="translate(2.50 6.19) rotate(.05)" font-size="3.20" fill="#7a7a7a">2</text></svg>
<svg class="tx" style="left:420px;top:49px" width="8" height="10"><text transform="translate(2.75 6.19) rotate(.05)" font-size="3.20" fill="#7a7a7a">3</text></svg>
<svg class="tx" style="left:460px;top:49px" width="8" height="10"><text transform="translate(2.00 6.19) rotate(.05)" font-size="3.20" fill="#7a7a7a">4</text></svg>
<svg class="tx" style="left:499px;top:49px" width="8" height="10"><text transform="translate(2.25 6.19) rotate(.05)" font-size="3.20" fill="#7a7a7a">5</text></svg>
<svg class="tx" style="left:538px;top:49px" width="8" height="10"><text transform="translate(2.50 6.19) rotate(.05)" font-size="3.20" fill="#7a7a7a">6</text></svg>
<div class="r" style="left:45.67px;top:56.80px;width:0.40px;height:0.80px;background:#cdcdcd;"></div>
<div class="r" style="left:50.57px;top:56.10px;width:0.40px;height:1.50px;background:#cdcdcd;"></div>
<div class="r" style="left:55.48px;top:56.80px;width:0.40px;height:0.80px;background:#cdcdcd;"></div>
<div class="r" style="left:60.39px;top:56.80px;width:0.40px;height:0.80px;background:#cdcdcd;"></div>
<div class="r" style="left:65.29px;top:56.80px;width:0.40px;height:0.80px;background:#cdcdcd;"></div>
<div class="r" style="left:75.11px;top:56.80px;width:0.40px;height:0.80px;background:#cdcdcd;"></div>
<div class="r" style="left:80.01px;top:56.80px;width:0.40px;height:0.80px;background:#cdcdcd;"></div>
<div class="r" style="left:84.92px;top:56.80px;width:0.40px;height:0.80px;background:#cdcdcd;"></div>
<div class="r" style="left:89.82px;top:56.10px;width:0.40px;height:1.50px;background:#cdcdcd;"></div>
<div class="r" style="left:94.73px;top:56.80px;width:0.40px;height:0.80px;background:#cdcdcd;"></div>
<div class="r" style="left:99.64px;top:56.80px;width:0.40px;height:0.80px;background:#cdcdcd;"></div>
<div class="r" style="left:104.54px;top:56.80px;width:0.40px;height:0.80px;background:#cdcdcd;"></div>
<div class="r" style="left:114.36px;top:56.80px;width:0.40px;height:0.80px;background:#cdcdcd;"></div>
<div class="r" style="left:119.26px;top:56.80px;width:0.40px;height:0.80px;background:#cdcdcd;"></div>
<div class="r" style="left:124.17px;top:56.80px;width:0.40px;height:0.80px;background:#cdcdcd;"></div>
<div class="r" style="left:129.07px;top:56.10px;width:0.40px;height:1.50px;background:#cdcdcd;"></div>
<div class="r" style="left:133.98px;top:56.80px;width:0.40px;height:0.80px;background:#cdcdcd;"></div>
<div class="r" style="left:138.89px;top:56.80px;width:0.40px;height:0.80px;background:#cdcdcd;"></div>
<div class="r" style="left:143.79px;top:56.80px;width:0.40px;height:0.80px;background:#cdcdcd;"></div>
<div class="r" style="left:153.61px;top:56.80px;width:0.40px;height:0.80px;background:#cdcdcd;"></div>
<div class="r" style="left:158.51px;top:56.80px;width:0.40px;height:0.80px;background:#cdcdcd;"></div>
<div class="r" style="left:163.42px;top:56.80px;width:0.40px;height:0.80px;background:#cdcdcd;"></div>
<div class="r" style="left:168.32px;top:56.10px;width:0.40px;height:1.50px;background:#cdcdcd;"></div>
<div class="r" style="left:173.23px;top:56.80px;width:0.40px;height:0.80px;background:#cdcdcd;"></div>
<div class="r" style="left:178.14px;top:56.80px;width:0.40px;height:0.80px;background:#cdcdcd;"></div>
<div class="r" style="left:183.04px;top:56.80px;width:0.40px;height:0.80px;background:#cdcdcd;"></div>
<div class="r" style="left:192.86px;top:56.80px;width:0.40px;height:0.80px;background:#cdcdcd;"></div>
<div class="r" style="left:197.76px;top:56.80px;width:0.40px;height:0.80px;background:#cdcdcd;"></div>
<div class="r" style="left:202.67px;top:56.80px;width:0.40px;height:0.80px;background:#cdcdcd;"></div>
<div class="r" style="left:207.57px;top:56.10px;width:0.40px;height:1.50px;background:#cdcdcd;"></div>
<div class="r" style="left:212.48px;top:56.80px;width:0.40px;height:0.80px;background:#cdcdcd;"></div>
<div class="r" style="left:217.39px;top:56.80px;width:0.40px;height:0.80px;background:#cdcdcd;"></div>
<div class="r" style="left:222.29px;top:56.80px;width:0.40px;height:0.80px;background:#cdcdcd;"></div>
<div class="r" style="left:232.11px;top:56.80px;width:0.40px;height:0.80px;background:#cdcdcd;"></div>
<div class="r" style="left:237.01px;top:56.80px;width:0.40px;height:0.80px;background:#cdcdcd;"></div>
<div class="r" style="left:241.92px;top:56.80px;width:0.40px;height:0.80px;background:#cdcdcd;"></div>
<div class="r" style="left:246.82px;top:56.10px;width:0.40px;height:1.50px;background:#cdcdcd;"></div>
<div class="r" style="left:251.73px;top:56.80px;width:0.40px;height:0.80px;background:#cdcdcd;"></div>
<div class="r" style="left:256.64px;top:56.80px;width:0.40px;height:0.80px;background:#cdcdcd;"></div>
<div class="r" style="left:261.54px;top:56.80px;width:0.40px;height:0.80px;background:#cdcdcd;"></div>
<div class="r" style="left:271.36px;top:56.80px;width:0.40px;height:0.80px;background:#cdcdcd;"></div>
<div class="r" style="left:276.26px;top:56.80px;width:0.40px;height:0.80px;background:#cdcdcd;"></div>
<div class="r" style="left:281.17px;top:56.80px;width:0.40px;height:0.80px;background:#cdcdcd;"></div>
<div class="r" style="left:286.07px;top:56.10px;width:0.40px;height:1.50px;background:#cdcdcd;"></div>
<div class="r" style="left:290.98px;top:56.80px;width:0.40px;height:0.80px;background:#cdcdcd;"></div>
<div class="r" style="left:295.89px;top:56.80px;width:0.40px;height:0.80px;background:#cdcdcd;"></div>
<div class="r" style="left:300.79px;top:56.80px;width:0.40px;height:0.80px;background:#cdcdcd;"></div>
<div class="r" style="left:310.61px;top:56.80px;width:0.40px;height:0.80px;background:#cdcdcd;"></div>
<div class="r" style="left:315.51px;top:56.80px;width:0.40px;height:0.80px;background:#cdcdcd;"></div>
<div class="r" style="left:320.42px;top:56.80px;width:0.40px;height:0.80px;background:#cdcdcd;"></div>
<div class="r" style="left:325.32px;top:56.10px;width:0.40px;height:1.50px;background:#cdcdcd;"></div>
<div class="r" style="left:330.23px;top:56.80px;width:0.40px;height:0.80px;background:#cdcdcd;"></div>
<div class="r" style="left:335.14px;top:56.80px;width:0.40px;height:0.80px;background:#cdcdcd;"></div>
<div class="r" style="left:340.04px;top:56.80px;width:0.40px;height:0.80px;background:#cdcdcd;"></div>
<div class="r" style="left:349.86px;top:56.80px;width:0.40px;height:0.80px;background:#cdcdcd;"></div>
<div class="r" style="left:354.76px;top:56.80px;width:0.40px;height:0.80px;background:#cdcdcd;"></div>
<div class="r" style="left:359.67px;top:56.80px;width:0.40px;height:0.80px;background:#cdcdcd;"></div>
<div class="r" style="left:364.57px;top:56.10px;width:0.40px;height:1.50px;background:#cdcdcd;"></div>
<div class="r" style="left:369.48px;top:56.80px;width:0.40px;height:0.80px;background:#cdcdcd;"></div>
<div class="r" style="left:374.39px;top:56.80px;width:0.40px;height:0.80px;background:#cdcdcd;"></div>
<div class="r" style="left:379.29px;top:56.80px;width:0.40px;height:0.80px;background:#cdcdcd;"></div>
<div class="r" style="left:389.11px;top:56.80px;width:0.40px;height:0.80px;background:#cdcdcd;"></div>
<div class="r" style="left:394.01px;top:56.80px;width:0.40px;height:0.80px;background:#cdcdcd;"></div>
<div class="r" style="left:398.92px;top:56.80px;width:0.40px;height:0.80px;background:#cdcdcd;"></div>
<div class="r" style="left:403.82px;top:56.10px;width:0.40px;height:1.50px;background:#cdcdcd;"></div>
<div class="r" style="left:408.73px;top:56.80px;width:0.40px;height:0.80px;background:#cdcdcd;"></div>
<div class="r" style="left:413.64px;top:56.80px;width:0.40px;height:0.80px;background:#cdcdcd;"></div>
<div class="r" style="left:418.54px;top:56.80px;width:0.40px;height:0.80px;background:#cdcdcd;"></div>
<div class="r" style="left:428.36px;top:56.80px;width:0.40px;height:0.80px;background:#cdcdcd;"></div>
<div class="r" style="left:433.26px;top:56.80px;width:0.40px;height:0.80px;background:#cdcdcd;"></div>
<div class="r" style="left:438.17px;top:56.80px;width:0.40px;height:0.80px;background:#cdcdcd;"></div>
<div class="r" style="left:443.07px;top:56.10px;width:0.40px;height:1.50px;background:#cdcdcd;"></div>
<div class="r" style="left:447.98px;top:56.80px;width:0.40px;height:0.80px;background:#cdcdcd;"></div>
<div class="r" style="left:452.89px;top:56.80px;width:0.40px;height:0.80px;background:#cdcdcd;"></div>
<div class="r" style="left:457.79px;top:56.80px;width:0.40px;height:0.80px;background:#cdcdcd;"></div>
<div class="r" style="left:467.61px;top:56.80px;width:0.40px;height:0.80px;background:#cdcdcd;"></div>
<div class="r" style="left:472.51px;top:56.80px;width:0.40px;height:0.80px;background:#cdcdcd;"></div>
<div class="r" style="left:477.42px;top:56.80px;width:0.40px;height:0.80px;background:#cdcdcd;"></div>
<div class="r" style="left:482.32px;top:56.10px;width:0.40px;height:1.50px;background:#cdcdcd;"></div>
<div class="r" style="left:487.23px;top:56.80px;width:0.40px;height:0.80px;background:#cdcdcd;"></div>
<div class="r" style="left:492.14px;top:56.80px;width:0.40px;height:0.80px;background:#cdcdcd;"></div>
<div class="r" style="left:497.04px;top:56.80px;width:0.40px;height:0.80px;background:#cdcdcd;"></div>
<div class="r" style="left:506.86px;top:56.80px;width:0.40px;height:0.80px;background:#cdcdcd;"></div>
<div class="r" style="left:511.76px;top:56.80px;width:0.40px;height:0.80px;background:#cdcdcd;"></div>
<div class="r" style="left:516.67px;top:56.80px;width:0.40px;height:0.80px;background:#cdcdcd;"></div>
<div class="r" style="left:521.57px;top:56.10px;width:0.40px;height:1.50px;background:#cdcdcd;"></div>
<div class="r" style="left:526.48px;top:56.80px;width:0.40px;height:0.80px;background:#cdcdcd;"></div>
<div class="r" style="left:531.39px;top:56.80px;width:0.40px;height:0.80px;background:#cdcdcd;"></div>
<div class="r" style="left:536.29px;top:56.80px;width:0.40px;height:0.80px;background:#cdcdcd;"></div>
<div class="r" style="left:546.11px;top:56.80px;width:0.40px;height:0.80px;background:#cdcdcd;"></div>
<div class="r" style="left:551.01px;top:56.80px;width:0.40px;height:0.80px;background:#cdcdcd;"></div>
<div class="r" style="left:555.92px;top:56.80px;width:0.40px;height:0.80px;background:#cdcdcd;"></div>
<div class="r" style="left:560.82px;top:56.10px;width:0.40px;height:1.50px;background:#cdcdcd;"></div>
<div class="r" style="left:565.73px;top:56.80px;width:0.40px;height:0.80px;background:#cdcdcd;"></div>
<svg class="tx" style="left:0px;top:85px" width="8" height="10"><text transform="translate(2.60 5.99) rotate(.05)" font-size="3.20" fill="#7a7a7a">4</text></svg>
<svg class="tx" style="left:0px;top:125px" width="8" height="10"><text transform="translate(2.60 5.24) rotate(.05)" font-size="3.20" fill="#7a7a7a">3</text></svg>
<svg class="tx" style="left:0px;top:164px" width="8" height="10"><text transform="translate(2.60 5.49) rotate(.05)" font-size="3.20" fill="#7a7a7a">2</text></svg>
<svg class="tx" style="left:0px;top:203px" width="8" height="10"><text transform="translate(2.60 5.74) rotate(.05)" font-size="3.20" fill="#7a7a7a">1</text></svg>
<svg class="tx" style="left:0px;top:242px" width="8" height="10"><text transform="translate(2.60 5.99) rotate(.05)" font-size="3.20" fill="#7a7a7a">0</text></svg>
<svg class="tx" style="left:0px;top:282px" width="8" height="10"><text transform="translate(2.60 5.24) rotate(.05)" font-size="3.20" fill="#7a7a7a">1</text></svg>
<svg class="tx" style="left:0px;top:321px" width="8" height="10"><text transform="translate(2.60 5.49) rotate(.05)" font-size="3.20" fill="#7a7a7a">2</text></svg>
<svg class="tx" style="left:0px;top:360px" width="8" height="10"><text transform="translate(2.60 5.74) rotate(.05)" font-size="3.20" fill="#7a7a7a">3</text></svg>
<svg class="tx" style="left:0px;top:399px" width="8" height="10"><text transform="translate(2.60 5.99) rotate(.05)" font-size="3.20" fill="#7a7a7a">4</text></svg>
<div class="r" style="left:5.60px;top:60.13px;width:1.20px;height:0.40px;background:#dcdcdc;"></div>
<div class="r" style="left:5.60px;top:65.04px;width:1.20px;height:0.40px;background:#dcdcdc;"></div>
<div class="r" style="left:4.40px;top:69.95px;width:2.40px;height:0.40px;background:#dcdcdc;"></div>
<div class="r" style="left:5.60px;top:74.86px;width:1.20px;height:0.40px;background:#dcdcdc;"></div>
<div class="r" style="left:5.60px;top:79.78px;width:1.20px;height:0.40px;background:#dcdcdc;"></div>
<div class="r" style="left:5.60px;top:84.69px;width:1.20px;height:0.40px;background:#dcdcdc;"></div>
<div class="r" style="left:4.40px;top:89.60px;width:2.40px;height:0.40px;background:#dcdcdc;"></div>
<div class="r" style="left:5.60px;top:94.51px;width:1.20px;height:0.40px;background:#dcdcdc;"></div>
<div class="r" style="left:5.60px;top:99.42px;width:1.20px;height:0.40px;background:#dcdcdc;"></div>
<div class="r" style="left:5.60px;top:104.34px;width:1.20px;height:0.40px;background:#dcdcdc;"></div>
<div class="r" style="left:4.40px;top:109.25px;width:2.40px;height:0.40px;background:#dcdcdc;"></div>
<div class="r" style="left:5.60px;top:114.16px;width:1.20px;height:0.40px;background:#dcdcdc;"></div>
<div class="r" style="left:5.60px;top:119.08px;width:1.20px;height:0.40px;background:#dcdcdc;"></div>
<div class="r" style="left:5.60px;top:123.99px;width:1.20px;height:0.40px;background:#dcdcdc;"></div>
<div class="r" style="left:4.40px;top:128.90px;width:2.40px;height:0.40px;background:#dcdcdc;"></div>
<div class="r" style="left:5.60px;top:133.81px;width:1.20px;height:0.40px;background:#dcdcdc;"></div>
<div class="r" style="left:5.60px;top:138.73px;width:1.20px;height:0.40px;background:#dcdcdc;"></div>
<div class="r" style="left:5.60px;top:143.64px;width:1.20px;height:0.40px;background:#dcdcdc;"></div>
<div class="r" style="left:4.40px;top:148.55px;width:2.40px;height:0.40px;background:#dcdcdc;"></div>
<div class="r" style="left:5.60px;top:153.46px;width:1.20px;height:0.40px;background:#dcdcdc;"></div>
<div class="r" style="left:5.60px;top:158.38px;width:1.20px;height:0.40px;background:#dcdcdc;"></div>
<div class="r" style="left:5.60px;top:163.29px;width:1.20px;height:0.40px;background:#dcdcdc;"></div>
<div class="r" style="left:4.40px;top:168.20px;width:2.40px;height:0.40px;background:#dcdcdc;"></div>
<div class="r" style="left:5.60px;top:173.11px;width:1.20px;height:0.40px;background:#dcdcdc;"></div>
<div class="r" style="left:5.60px;top:178.03px;width:1.20px;height:0.40px;background:#dcdcdc;"></div>
<div class="r" style="left:5.60px;top:182.94px;width:1.20px;height:0.40px;background:#dcdcdc;"></div>
<div class="r" style="left:4.40px;top:187.85px;width:2.40px;height:0.40px;background:#dcdcdc;"></div>
<div class="r" style="left:5.60px;top:192.76px;width:1.20px;height:0.40px;background:#dcdcdc;"></div>
<div class="r" style="left:5.60px;top:197.68px;width:1.20px;height:0.40px;background:#dcdcdc;"></div>
<div class="r" style="left:5.60px;top:202.59px;width:1.20px;height:0.40px;background:#dcdcdc;"></div>
<div class="r" style="left:4.40px;top:207.50px;width:2.40px;height:0.40px;background:#dcdcdc;"></div>
<div class="r" style="left:5.60px;top:212.41px;width:1.20px;height:0.40px;background:#dcdcdc;"></div>
<div class="r" style="left:5.60px;top:217.33px;width:1.20px;height:0.40px;background:#dcdcdc;"></div>
<div class="r" style="left:5.60px;top:222.24px;width:1.20px;height:0.40px;background:#dcdcdc;"></div>
<div class="r" style="left:4.40px;top:227.15px;width:2.40px;height:0.40px;background:#dcdcdc;"></div>
<div class="r" style="left:5.60px;top:232.06px;width:1.20px;height:0.40px;background:#dcdcdc;"></div>
<div class="r" style="left:5.60px;top:236.98px;width:1.20px;height:0.40px;background:#dcdcdc;"></div>
<div class="r" style="left:5.60px;top:241.89px;width:1.20px;height:0.40px;background:#dcdcdc;"></div>
<div class="r" style="left:4.40px;top:246.80px;width:2.40px;height:0.40px;background:#dcdcdc;"></div>
<div class="r" style="left:5.60px;top:251.71px;width:1.20px;height:0.40px;background:#dcdcdc;"></div>
<div class="r" style="left:5.60px;top:256.62px;width:1.20px;height:0.40px;background:#dcdcdc;"></div>
<div class="r" style="left:5.60px;top:261.54px;width:1.20px;height:0.40px;background:#dcdcdc;"></div>
<div class="r" style="left:4.40px;top:266.45px;width:2.40px;height:0.40px;background:#dcdcdc;"></div>
<div class="r" style="left:5.60px;top:271.36px;width:1.20px;height:0.40px;background:#dcdcdc;"></div>
<div class="r" style="left:5.60px;top:276.28px;width:1.20px;height:0.40px;background:#dcdcdc;"></div>
<div class="r" style="left:5.60px;top:281.19px;width:1.20px;height:0.40px;background:#dcdcdc;"></div>
<div class="r" style="left:4.40px;top:286.10px;width:2.40px;height:0.40px;background:#dcdcdc;"></div>
<div class="r" style="left:5.60px;top:291.01px;width:1.20px;height:0.40px;background:#dcdcdc;"></div>
<div class="r" style="left:5.60px;top:295.93px;width:1.20px;height:0.40px;background:#dcdcdc;"></div>
<div class="r" style="left:5.60px;top:300.84px;width:1.20px;height:0.40px;background:#dcdcdc;"></div>
<div class="r" style="left:4.40px;top:305.75px;width:2.40px;height:0.40px;background:#dcdcdc;"></div>
<div class="r" style="left:5.60px;top:310.66px;width:1.20px;height:0.40px;background:#dcdcdc;"></div>
<div class="r" style="left:5.60px;top:315.57px;width:1.20px;height:0.40px;background:#dcdcdc;"></div>
<div class="r" style="left:5.60px;top:320.49px;width:1.20px;height:0.40px;background:#dcdcdc;"></div>
<div class="r" style="left:4.40px;top:325.40px;width:2.40px;height:0.40px;background:#dcdcdc;"></div>
<div class="r" style="left:5.60px;top:330.31px;width:1.20px;height:0.40px;background:#dcdcdc;"></div>
<div class="r" style="left:5.60px;top:335.23px;width:1.20px;height:0.40px;background:#dcdcdc;"></div>
<div class="r" style="left:5.60px;top:340.14px;width:1.20px;height:0.40px;background:#dcdcdc;"></div>
<div class="r" style="left:4.40px;top:345.05px;width:2.40px;height:0.40px;background:#dcdcdc;"></div>
<div class="r" style="left:5.60px;top:349.96px;width:1.20px;height:0.40px;background:#dcdcdc;"></div>
<div class="r" style="left:5.60px;top:354.88px;width:1.20px;height:0.40px;background:#dcdcdc;"></div>
<div class="r" style="left:5.60px;top:359.79px;width:1.20px;height:0.40px;background:#dcdcdc;"></div>
<div class="r" style="left:4.40px;top:364.70px;width:2.40px;height:0.40px;background:#dcdcdc;"></div>
<div class="r" style="left:5.60px;top:369.61px;width:1.20px;height:0.40px;background:#dcdcdc;"></div>
<div class="r" style="left:5.60px;top:374.53px;width:1.20px;height:0.40px;background:#dcdcdc;"></div>
<div class="r" style="left:5.60px;top:379.44px;width:1.20px;height:0.40px;background:#dcdcdc;"></div>
<div class="r" style="left:4.40px;top:384.35px;width:2.40px;height:0.40px;background:#dcdcdc;"></div>
<div class="r" style="left:5.60px;top:389.26px;width:1.20px;height:0.40px;background:#dcdcdc;"></div>
<div class="r" style="left:5.60px;top:394.18px;width:1.20px;height:0.40px;background:#dcdcdc;"></div>
<div class="r" style="left:5.60px;top:399.09px;width:1.20px;height:0.40px;background:#dcdcdc;"></div>
<div class="r" style="left:4.40px;top:404.00px;width:2.40px;height:0.40px;background:#dcdcdc;"></div>
<div class="r" style="left:5.60px;top:408.91px;width:1.20px;height:0.40px;background:#dcdcdc;"></div>
<div class="r" style="left:5.60px;top:413.82px;width:1.20px;height:0.40px;background:#dcdcdc;"></div>
<div class="r" style="left:5.60px;top:418.74px;width:1.20px;height:0.40px;background:#dcdcdc;"></div>
<div class="r" style="left:4.40px;top:423.65px;width:2.40px;height:0.40px;background:#dcdcdc;"></div>
<div class="r" style="left:5.60px;top:428.56px;width:1.20px;height:0.40px;background:#dcdcdc;"></div>
<div class="r" style="left:44.00px;top:100.00px;width:523.30px;height:294.00px;background:#ffffff;box-shadow:0 0 3px rgba(0,0,0,.13);"></div>
<svg class="tx" style="left:64px;top:115px" width="100" height="31"><text transform="translate(2.20 20.00) rotate(.05) scale(0.9327 1)" font-size="18.00" fill="#5aa3c8" stroke="#fff" stroke-width="0.2">Our Process</text></svg>
<div class="r" style="left:44.00px;top:199.10px;width:131.00px;height:0.80px;background:#46535e;"></div>
<svg class="r" style="left:170.00px;top:196.00px;" width="6.00" height="7.00" viewBox="0 0 60 70"><path d="M4 4L54 35L4 66" fill="none" stroke="#46535e" stroke-width="8"/></svg>
<div class="r" style="left:178.00px;top:199.10px;width:111.90px;height:0.80px;background:#62a8cb;"></div>
<svg class="r" style="left:284.90px;top:196.00px;" width="6.00" height="7.00" viewBox="0 0 60 70"><path d="M4 4L54 35L4 66" fill="none" stroke="#62a8cb" stroke-width="8"/></svg>
<div class="r" style="left:292.50px;top:199.10px;width:111.40px;height:0.80px;background:#e8ae2c;"></div>
<svg class="r" style="left:398.90px;top:196.00px;" width="6.00" height="7.00" viewBox="0 0 60 70"><path d="M4 4L54 35L4 66" fill="none" stroke="#e8ae2c" stroke-width="8"/></svg>
<div class="r" style="left:407.00px;top:199.10px;width:111.40px;height:0.80px;background:#8bc34a;"></div>
<svg class="r" style="left:513.40px;top:196.00px;" width="6.00" height="7.00" viewBox="0 0 60 70"><path d="M4 4L54 35L4 66" fill="none" stroke="#8bc34a" stroke-width="8"/></svg>
<div class="r" style="left:68.00px;top:204.00px;width:95.00px;height:165.90px;background:#43535f;"></div>
<svg class="tx" style="left:78px;top:210px" width="71" height="22"><text transform="translate(2.10 14.30) rotate(.05) scale(0.9980 1)" font-size="11.60" fill="#f1f4f5">Background,</text></svg>
<svg class="tx" style="left:78px;top:226px" width="63" height="22"><text transform="translate(2.10 13.75) rotate(.05) scale(0.9423 1)" font-size="11.60" fill="#f1f4f5">Research +</text></svg>
<svg class="tx" style="left:78px;top:241px" width="48" height="22"><text transform="translate(2.10 14.20) rotate(.05) scale(0.9515 1)" font-size="11.60" fill="#f1f4f5">Analysis</text></svg>
<div class="r" style="left:182.20px;top:204.00px;width:95.30px;height:165.90px;background:#62a9cc;"></div>
<svg class="tx" style="left:192px;top:210px" width="51" height="22"><text transform="translate(2.30 14.30) rotate(.05) scale(0.9743 1)" font-size="11.60" fill="#f1f4f5">Strategic</text></svg>
<svg class="tx" style="left:192px;top:226px" width="51" height="22"><text transform="translate(2.30 13.75) rotate(.05) scale(0.9790 1)" font-size="11.60" fill="#f1f4f5">Planning</text></svg>
<div class="r" style="left:296.50px;top:204.00px;width:95.60px;height:165.90px;background:#eab22d;"></div>
<svg class="tx" style="left:306px;top:210px" width="54" height="22"><text transform="translate(2.60 14.30) rotate(.05) scale(1.0179 1)" font-size="11.60" fill="#f1f4f5">Materials</text></svg>
<svg class="tx" style="left:306px;top:226px" width="77" height="22"><text transform="translate(2.60 13.75) rotate(.05) scale(1.0271 1)" font-size="11.60" fill="#f1f4f5">Development</text></svg>
<div class="r" style="left:411.00px;top:204.00px;width:95.80px;height:165.90px;background:#8bc44a;"></div>
<svg class="tx" style="left:421px;top:210px" width="39" height="22"><text transform="translate(2.10 14.30) rotate(.05) scale(0.9724 1)" font-size="11.60" fill="#f1f4f5">Expert</text></svg>
<svg class="tx" style="left:421px;top:226px" width="56" height="22"><text transform="translate(2.10 13.75) rotate(.05) scale(0.9795 1)" font-size="11.60" fill="#f1f4f5">Execution</text></svg>
<svg class="tx" style="left:549px;top:377px" width="11" height="12"><text transform="translate(2.30 6.97) rotate(.05)" font-size="4.41" fill="#9c9c9c">59</text></svg>
<svg class="r" style="left:127.00px;top:335.80px;" width="31.00" height="31.00" viewBox="0 0 310 310"><g fill="none" stroke="#e6e9eb" stroke-width="10"><circle cx="155" cy="155" r="140"/><path d="M155 15V155L289 114M155 155L254 254"/></g></svg>
<svg class="r" style="left:241.00px;top:335.00px;" width="31.00" height="31.00" viewBox="0 0 310 310"><g fill="none" stroke="#e9f2f7" stroke-width="9.5" stroke-linejoin="round"><path d="M154 236C120 180 82 140 82 96A72 72 0 0 1 226 96C226 140 188 180 154 236Z"/><circle cx="154" cy="94" r="30"/><path d="M100 165H62L20 292L88 268L154 296L220 268L290 292L246 165H208"/></g></svg>
<svg class="r" style="left:355.00px;top:333.00px;" width="36.00" height="36.00" viewBox="0 0 360 360"><g fill="none" stroke="#f8eed4" stroke-width="9" stroke-linejoin="round"><path d="M226.6 113.5L226.6 146.5L204.0 147.3L195.1 168.7L210.5 185.2L187.2 208.5L170.7 193.1L149.3 202.0L148.5 224.6L115.5 224.6L114.7 202.0L93.3 193.1L76.8 208.5L53.5 185.2L68.9 168.7L60.0 147.3L37.4 146.5L37.4 113.5L60.0 112.7L68.9 91.3L53.5 74.8L76.8 51.5L93.3 66.9L114.7 58.0L115.5 35.4L148.5 35.4L149.3 58.0L170.7 66.9L187.2 51.5L210.5 74.8L195.1 91.3L204.0 112.7Z"/><circle cx="132" cy="130" r="32"/><path d="M317.0 235.3L317.0 258.7L300.6 259.1L294.3 274.2L305.6 286.1L289.1 302.6L277.2 291.3L262.1 297.6L261.7 314.0L238.3 314.0L237.9 297.6L222.8 291.3L210.9 302.6L194.4 286.1L205.7 274.2L199.4 259.1L183.0 258.7L183.0 235.3L199.4 234.9L205.7 219.8L194.4 207.9L210.9 191.4L222.8 202.7L237.9 196.4L238.3 180.0L261.7 180.0L262.1 196.4L277.2 202.7L289.1 191.4L305.6 207.9L294.3 219.8L300.6 234.9Z"/><circle cx="250" cy="247" r="22"/></g></svg>
<svg class="r" style="left:472.00px;top:334.00px;" width="31.00" height="33.00" viewBox="0 0 310 330"><g fill="none" stroke="#eef6e2" stroke-width="9.5" stroke-linejoin="round"><rect x="30" y="185" width="78" height="115"/><path d="M108 200C150 150 165 90 185 40C200 20 225 30 225 60C225 100 210 120 210 145H270C290 145 295 175 275 185C295 195 292 225 272 232C288 245 282 270 262 275C272 290 262 305 240 305H160C140 305 125 295 108 290"/></g></svg>
<div class="r" style="left:66.50px;top:202.50px;width:3.00px;height:3.00px;background:#fff;border:.45px solid #adadad;border-radius:50%;"></div>
<div class="r" style="left:114.00px;top:202.50px;width:3.00px;height:3.00px;background:#fff;border:.45px solid #adadad;border-radius:50%;"></div>
<div class="r" style="left:161.50px;top:202.50px;width:3.00px;height:3.00px;background:#fff;border:.45px solid #adadad;border-radius:50%;"></div>
<div class="r" style="left:66.50px;top:285.30px;width:3.00px;height:3.00px;background:#fff;border:.45px solid #adadad;border-radius:50%;"></div>
<div class="r" style="left:161.50px;top:285.30px;width:3.00px;height:3.00px;background:#fff;border:.45px solid #adadad;border-radius:50%;"></div>
<div class="r" style="left:66.50px;top:368.40px;width:3.00px;height:3.00px;background:#fff;border:.45px solid #adadad;border-radius:50%;"></div>
<div class="r" style="left:114.00px;top:368.40px;width:3.00px;height:3.00px;background:#fff;border:.45px solid #adadad;border-radius:50%;"></div>
<div class="r" style="left:161.50px;top:368.40px;width:3.00px;height:3.00px;background:#fff;border:.45px solid #adadad;border-radius:50%;"></div>
<div class="r" style="left:115.30px;top:197.00px;width:0.40px;height:5.80px;background:#c4c4c4;"></div>
<div class="r" style="left:114.00px;top:194.00px;width:3.00px;height:3.00px;background:#999;border-radius:50%;"></div>
<div class="r" style="left:114.90px;top:195.00px;width:1.20px;height:1.20px;background:#e8e8e8;border-radius:50%;"></div>
<div class="r" style="left:180.70px;top:202.50px;width:3.00px;height:3.00px;background:#fff;border:.45px solid #adadad;border-radius:50%;"></div>
<div class="r" style="left:228.35px;top:202.50px;width:3.00px;height:3.00px;background:#fff;border:.45px solid #adadad;border-radius:50%;"></div>
<div class="r" style="left:276.00px;top:202.50px;width:3.00px;height:3.00px;background:#fff;border:.45px solid #adadad;border-radius:50%;"></div>
<div class="r" style="left:180.70px;top:285.30px;width:3.00px;height:3.00px;background:#fff;border:.45px solid #adadad;border-radius:50%;"></div>
<div class="r" style="left:276.00px;top:285.30px;width:3.00px;height:3.00px;background:#fff;border:.45px solid #adadad;border-radius:50%;"></div>
<div class="r" style="left:180.70px;top:368.40px;width:3.00px;height:3.00px;background:#fff;border:.45px solid #adadad;border-radius:50%;"></div>
<div class="r" style="left:228.35px;top:368.40px;width:3.00px;height:3.00px;background:#fff;border:.45px solid #adadad;border-radius:50%;"></div>
<div class="r" style="left:276.00px;top:368.40px;width:3.00px;height:3.00px;background:#fff;border:.45px solid #adadad;border-radius:50%;"></div>
<div class="r" style="left:229.65px;top:197.00px;width:0.40px;height:5.80px;background:#c4c4c4;"></div>
<div class="r" style="left:228.35px;top:194.00px;width:3.00px;height:3.00px;background:#999;border-radius:50%;"></div>
<div class="r" style="left:229.25px;top:195.00px;width:1.20px;height:1.20px;background:#e8e8e8;border-radius:50%;"></div>
<div class="r" style="left:295.00px;top:202.50px;width:3.00px;height:3.00px;background:#fff;border:.45px solid #adadad;border-radius:50%;"></div>
<div class="r" style="left:342.80px;top:202.50px;width:3.00px;height:3.00px;background:#fff;border:.45px solid #adadad;border-radius:50%;"></div>
<div class="r" style="left:390.60px;top:202.50px;width:3.00px;height:3.00px;background:#fff;border:.45px solid #adadad;border-radius:50%;"></div>
<div class="r" style="left:295.00px;top:285.30px;width:3.00px;height:3.00px;background:#fff;border:.45px solid #adadad;border-radius:50%;"></div>
<div class="r" style="left:390.60px;top:285.30px;width:3.00px;height:3.00px;background:#fff;border:.45px solid #adadad;border-radius:50%;"></div>
<div class="r" style="left:295.00px;top:368.40px;width:3.00px;height:3.00px;background:#fff;border:.45px solid #adadad;border-radius:50%;"></div>
<div class="r" style="left:342.80px;top:368.40px;width:3.00px;height:3.00px;background:#fff;border:.45px solid #adadad;border-radius:50%;"></div>
<div class="r" style="left:390.60px;top:368.40px;width:3.00px;height:3.00px;background:#fff;border:.45px solid #adadad;border-radius:50%;"></div>
<div class="r" style="left:344.10px;top:197.00px;width:0.40px;height:5.80px;background:#c4c4c4;"></div>
<div class="r" style="left:342.80px;top:194.00px;width:3.00px;height:3.00px;background:#999;border-radius:50%;"></div>
<div class="r" style="left:343.70px;top:195.00px;width:1.20px;height:1.20px;background:#e8e8e8;border-radius:50%;"></div>
<div class="r" style="left:409.50px;top:202.50px;width:3.00px;height:3.00px;background:#fff;border:.45px solid #adadad;border-radius:50%;"></div>
<div class="r" style="left:457.40px;top:202.50px;width:3.00px;height:3.00px;background:#fff;border:.45px solid #adadad;border-radius:50%;"></div>
<div class="r" style="left:505.30px;top:202.50px;width:3.00px;height:3.00px;background:#fff;border:.45px solid #adadad;border-radius:50%;"></div>
<div class="r" style="left:409.50px;top:285.30px;width:3.00px;height:3.00px;background:#fff;border:.45px solid #adadad;border-radius:50%;"></div>
<div class="r" style="left:505.30px;top:285.30px;width:3.00px;height:3.00px;background:#fff;border:.45px solid #adadad;border-radius:50%;"></div>
<div class="r" style="left:409.50px;top:368.40px;width:3.00px;height:3.00px;background:#fff;border:.45px solid #adadad;border-radius:50%;"></div>
<div class="r" style="left:457.40px;top:368.40px;width:3.00px;height:3.00px;background:#fff;border:.45px solid #adadad;border-radius:50%;"></div>
<div class="r" style="left:505.30px;top:368.40px;width:3.00px;height:3.00px;background:#fff;border:.45px solid #adadad;border-radius:50%;"></div>
<div class="r" style="left:458.70px;top:197.00px;width:0.40px;height:5.80px;background:#c4c4c4;"></div>
<div class="r" style="left:457.40px;top:194.00px;width:3.00px;height:3.00px;background:#999;border-radius:50%;"></div>
<div class="r" style="left:458.30px;top:195.00px;width:1.20px;height:1.20px;background:#e8e8e8;border-radius:50%;"></div>
<div class="r" style="left:276.80px;top:35.20px;width:75.00px;height:186.40px;background:#ededed;border-radius:0 0 2.6px 2.6px;box-shadow:0 3px 8px rgba(0,0,0,.28),0 0 .7px rgba(0,0,0,.38);"></div>
<svg class="tx" style="left:280px;top:36px" width="21" height="13"><text transform="translate(2.10 8.30) rotate(.05) scale(0.8845 1)" font-size="5.40" fill="#8e8e8e">Library</text></svg>
<svg class="r" style="left:283.80px;top:49.35px;" width="6.00" height="6.20" viewBox="0 0 56 58"><path d="M26 4L33 20L50 22L38 34L41 52L26 43L11 52L14 34L2 22L19 20Z" fill="#fffefa" stroke="#bfa976" stroke-width="4.2" stroke-linejoin="round"/><circle cx="43" cy="46" r="6.5" fill="#eda63c"/></svg>
<svg class="tx" style="left:289px;top:47px" width="17" height="13"><text transform="translate(2.90 7.45) rotate(.05) scale(0.8287 1)" font-size="5.40" fill="#262626" stroke="#262626" stroke-width="0.07">Fade</text></svg>
<svg class="tx" style="left:301px;top:46px" width="12" height="13"><text transform="translate(2.40 8.35) rotate(.05)" font-size="5.40" fill="#333" font-family="DejaVu Sans, sans-serif">↑</text></svg>
<svg class="r" style="left:283.80px;top:57.58px;" width="6.00" height="6.20" viewBox="0 0 56 58"><path d="M26 4L33 20L50 22L38 34L41 52L26 43L11 52L14 34L2 22L19 20Z" fill="#fffefa" stroke="#bfa976" stroke-width="4.2" stroke-linejoin="round"/><circle cx="43" cy="46" r="6.5" fill="#eda63c"/></svg>
<svg class="tx" style="left:289px;top:55px" width="17" height="13"><text transform="translate(2.90 7.68) rotate(.05) scale(0.8287 1)" font-size="5.40" fill="#262626" stroke="#262626" stroke-width="0.07">Fade</text></svg>
<svg class="tx" style="left:301px;top:55px" width="12" height="13"><text transform="translate(2.40 7.58) rotate(.05)" font-size="5.40" fill="#333" font-family="DejaVu Sans, sans-serif">→</text></svg>
<svg class="r" style="left:283.80px;top:65.81px;" width="6.00" height="6.20" viewBox="0 0 56 58"><path d="M26 4L33 20L50 22L38 34L41 52L26 43L11 52L14 34L2 22L19 20Z" fill="#fffefa" stroke="#bfa976" stroke-width="4.2" stroke-linejoin="round"/><circle cx="43" cy="46" r="6.5" fill="#eda63c"/></svg>
<svg class="tx" style="left:289px;top:63px" width="17" height="13"><text transform="translate(2.90 7.91) rotate(.05) scale(0.8287 1)" font-size="5.40" fill="#262626" stroke="#262626" stroke-width="0.07">Fade</text></svg>
<svg class="tx" style="left:301px;top:63px" width="12" height="13"><text transform="translate(2.40 7.81) rotate(.05)" font-size="5.40" fill="#333" font-family="DejaVu Sans, sans-serif">↓</text></svg>
<svg class="r" style="left:283.80px;top:74.04px;" width="6.00" height="6.20" viewBox="0 0 56 58"><path d="M26 4L33 20L50 22L38 34L41 52L26 43L11 52L14 34L2 22L19 20Z" fill="#fffefa" stroke="#bfa976" stroke-width="4.2" stroke-linejoin="round"/><circle cx="43" cy="46" r="6.5" fill="#eda63c"/></svg>
<svg class="tx" style="left:289px;top:71px" width="17" height="13"><text transform="translate(2.90 8.14) rotate(.05) scale(0.8287 1)" font-size="5.40" fill="#262626" stroke="#262626" stroke-width="0.07">Fade</text></svg>
<svg class="tx" style="left:301px;top:71px" width="12" height="13"><text transform="translate(2.40 8.04) rotate(.05)" font-size="5.40" fill="#333" font-family="DejaVu Sans, sans-serif">←</text></svg>
<svg class="r" style="left:283.80px;top:82.27px;" width="6.00" height="6.20" viewBox="0 0 56 58"><path d="M26 4L33 20L50 22L38 34L41 52L26 43L11 52L14 34L2 22L19 20Z" fill="#fffefa" stroke="#bfa976" stroke-width="4.2" stroke-linejoin="round"/><circle cx="43" cy="46" r="6.5" fill="#eda63c"/></svg>
<svg class="tx" style="left:289px;top:79px" width="53" height="13"><text transform="translate(2.90 8.37) rotate(.05) scale(0.9050 1)" font-size="5.40" fill="#242424" stroke="#242424" stroke-width="0.07">Fade from bottom left</text></svg>
<svg class="r" style="left:283.80px;top:90.50px;" width="6.00" height="6.20" viewBox="0 0 56 58"><path d="M26 4L33 20L50 22L38 34L41 52L26 43L11 52L14 34L2 22L19 20Z" fill="#fffefa" stroke="#bfa976" stroke-width="4.2" stroke-linejoin="round"/><circle cx="43" cy="46" r="6.5" fill="#eda63c"/></svg>
<svg class="tx" style="left:289px;top:88px" width="45" height="13"><text transform="translate(2.90 7.60) rotate(.05) scale(0.9050 1)" font-size="5.40" fill="#242424" stroke="#242424" stroke-width="0.07">Fade from top left</text></svg>
<svg class="r" style="left:283.80px;top:98.73px;" width="6.00" height="6.20" viewBox="0 0 56 58"><path d="M26 4L33 20L50 22L38 34L41 52L26 43L11 52L14 34L2 22L19 20Z" fill="#fffefa" stroke="#bfa976" stroke-width="4.2" stroke-linejoin="round"/><circle cx="43" cy="46" r="6.5" fill="#eda63c"/></svg>
<svg class="tx" style="left:289px;top:96px" width="56" height="13"><text transform="translate(2.90 7.83) rotate(.05) scale(0.9050 1)" font-size="5.40" fill="#242424" stroke="#242424" stroke-width="0.07">Fade from bottom right</text></svg>
<svg class="r" style="left:283.80px;top:106.96px;" width="6.00" height="6.20" viewBox="0 0 56 58"><path d="M26 4L33 20L50 22L38 34L41 52L26 43L11 52L14 34L2 22L19 20Z" fill="#fffefa" stroke="#bfa976" stroke-width="4.2" stroke-linejoin="round"/><circle cx="43" cy="46" r="6.5" fill="#eda63c"/></svg>
<svg class="tx" style="left:289px;top:104px" width="48" height="13"><text transform="translate(2.90 8.06) rotate(.05) scale(0.9050 1)" font-size="5.40" fill="#242424" stroke="#242424" stroke-width="0.07">Fade from top right</text></svg>
<svg class="r" style="left:283.80px;top:115.19px;" width="6.00" height="6.20" viewBox="0 0 56 58"><path d="M26 4L33 20L50 22L38 34L41 52L26 43L11 52L14 34L2 22L19 20Z" fill="#fffefa" stroke="#bfa976" stroke-width="4.2" stroke-linejoin="round"/><circle cx="43" cy="46" r="6.5" fill="#eda63c"/></svg>
<svg class="tx" style="left:289px;top:112px" width="58" height="13"><text transform="translate(2.90 8.29) rotate(.05) scale(0.9050 1)" font-size="5.40" fill="#242424" stroke="#242424" stroke-width="0.07">Fade Bounce_Synapsis</text></svg>
<svg class="r" style="left:283.80px;top:123.42px;" width="6.00" height="6.20" viewBox="0 0 56 58"><path d="M26 4L33 20L50 22L38 34L41 52L26 43L11 52L14 34L2 22L19 20Z" fill="#fffefa" stroke="#bfa976" stroke-width="4.2" stroke-linejoin="round"/><circle cx="43" cy="46" r="6.5" fill="#eda63c"/></svg>
<svg class="tx" style="left:289px;top:121px" width="40" height="13"><text transform="translate(2.90 7.52) rotate(.05) scale(0.9050 1)" font-size="5.40" fill="#242424" stroke="#242424" stroke-width="0.07">Appear &amp; Pulse</text></svg>
<svg class="r" style="left:283.80px;top:131.65px;" width="6.00" height="6.20" viewBox="0 0 56 58"><path d="M26 4L33 20L50 22L38 34L41 52L26 43L11 52L14 34L2 22L19 20Z" fill="#fffefa" stroke="#bfa976" stroke-width="4.2" stroke-linejoin="round"/><circle cx="43" cy="46" r="6.5" fill="#eda63c"/></svg>
<svg class="tx" style="left:289px;top:129px" width="53" height="13"><text transform="translate(2.90 7.75) rotate(.05) scale(0.9050 1)" font-size="5.40" fill="#242424" stroke="#242424" stroke-width="0.07">Scale Down Entrance</text></svg>
<div class="r" style="left:276.80px;top:139.30px;width:75.00px;height:6.90px;background:#2170ee;"></div>
<svg class="r" style="left:283.80px;top:139.88px;" width="6.00" height="6.20" viewBox="0 0 56 58"><path d="M26 4L33 20L50 22L38 34L41 52L26 43L11 52L14 34L2 22L19 20Z" fill="#2170ee" stroke="#fff" stroke-width="4.2" stroke-linejoin="round"/><circle cx="43" cy="46" r="6.5" fill="#eda63c"/></svg>
<svg class="tx" style="left:289px;top:137px" width="44" height="13"><text transform="translate(2.90 7.98) rotate(.05) scale(0.9050 1)" font-size="5.40" fill="#fff" stroke="#fff" stroke-width="0.07">Bounce Entrance</text></svg>
<svg class="r" style="left:283.80px;top:148.11px;" width="6.00" height="6.20" viewBox="0 0 56 58"><path d="M26 4L33 20L50 22L38 34L41 52L26 43L11 52L14 34L2 22L19 20Z" fill="#fffefa" stroke="#bfa976" stroke-width="4.2" stroke-linejoin="round"/><circle cx="43" cy="46" r="6.5" fill="#eda63c"/></svg>
<svg class="tx" style="left:289px;top:145px" width="40" height="13"><text transform="translate(2.90 8.21) rotate(.05) scale(0.9050 1)" font-size="5.40" fill="#242424" stroke="#242424" stroke-width="0.07">Drop &amp; Bounce</text></svg>
<svg class="r" style="left:283.80px;top:156.34px;" width="6.00" height="6.20" viewBox="0 0 56 58"><path d="M26 4L33 20L50 22L38 34L41 52L26 43L11 52L14 34L2 22L19 20Z" fill="#fffefa" stroke="#bfa976" stroke-width="4.2" stroke-linejoin="round"/><circle cx="43" cy="46" r="6.5" fill="#eda63c"/></svg>
<svg class="tx" style="left:289px;top:154px" width="60" height="13"><text transform="translate(2.90 7.44) rotate(.05) scale(0.9050 1)" font-size="5.40" fill="#242424" stroke="#242424" stroke-width="0.07">Move &amp; Zoom Emphasis</text></svg>
<svg class="r" style="left:283.80px;top:164.57px;" width="6.00" height="6.20" viewBox="0 0 56 58"><path d="M26 4L33 20L50 22L38 34L41 52L26 43L11 52L14 34L2 22L19 20Z" fill="#fffefa" stroke="#bfa976" stroke-width="4.2" stroke-linejoin="round"/><circle cx="43" cy="46" r="6.5" fill="#eda63c"/></svg>
<svg class="tx" style="left:289px;top:162px" width="40" height="13"><text transform="translate(2.90 7.67) rotate(.05) scale(0.9050 1)" font-size="5.40" fill="#242424" stroke="#242424" stroke-width="0.07">Click Emphasis</text></svg>
<div class="r" style="left:276.80px;top:173.10px;width:75.00px;height:0.60px;background:#d9d9d9;"></div>
<svg class="tx" style="left:280px;top:176px" width="17" height="13"><text transform="translate(2.10 7.40) rotate(.05) scale(0.8287 1)" font-size="5.40" fill="#8e8e8e">Save</text></svg>
<div class="r" style="left:284.60px;top:189.40px;width:4.60px;height:4.80px;background:#c6dcf2;border-radius:.8px;opacity:.85;"></div>
<svg class="tx" style="left:290px;top:186px" width="50" height="13"><text transform="translate(2.20 7.50) rotate(.05) scale(0.8919 1)" font-size="5.40" fill="#b9b9b9">Save from Selection</text></svg>
<div class="r" style="left:276.80px;top:198.50px;width:75.00px;height:0.60px;background:#d9d9d9;"></div>
<svg class="tx" style="left:280px;top:200px" width="23" height="13"><text transform="translate(2.10 7.60) rotate(.05) scale(0.8609 1)" font-size="5.40" fill="#8e8e8e">Manage</text></svg>
<div class="r" style="left:283.40px;top:214.20px;width:5.40px;height:4.80px;background:#f6f9fc;border:.5px solid #506d8d;"></div>
<div class="r" style="left:285.80px;top:213.40px;width:4.40px;height:1.40px;background:#3f8fe0;transform:rotate(-45deg);"></div>
<svg class="tx" style="left:289px;top:210px" width="55" height="13"><text transform="translate(2.90 8.20) rotate(.05) scale(0.9157 1)" font-size="5.40" fill="#262626" stroke="#262626" stroke-width="0.07">Edit Animation Library</text></svg>
<svg class="tx" style="left:6px;top:434px" width="33" height="12"><text transform="translate(2.30 6.77) rotate(.05)" font-size="4.41" fill="#6d6d6d">Slide 59 of 73</text></svg>
<svg class="tx" style="left:40px;top:434px" width="50" height="11"><text transform="translate(2.50 6.71) rotate(.05)" font-size="4.23" fill="#6d6d6d">English (United States)</text></svg>
<div class="r" style="left:439.40px;top:437.80px;width:3.80px;height:2.80px;background:#5e5e5e;border-radius:.5px;"></div>
<svg class="tx" style="left:442px;top:434px" width="25" height="11"><text transform="translate(2.30 6.62) rotate(.05)" font-size="3.93" fill="#6d6d6d">Comments</text></svg>
<div class="r" style="left:467.50px;top:435.60px;width:12.00px;height:7.40px;background:#a9a9a9;"></div>
<div class="r" style="left:471.20px;top:437.40px;width:4.60px;height:4.00px;background:#f5f5f5;border:.4px solid #777;"></div>
<div class="r" style="left:471.20px;top:437.40px;width:1.40px;height:4.00px;background:#777;"></div>
<div class="r" style="left:484.40px;top:437.20px;width:1.80px;height:1.80px;background:#4a4a4a;"></div>
<div class="r" style="left:484.40px;top:439.60px;width:1.80px;height:1.80px;background:#4a4a4a;"></div>
<div class="r" style="left:486.80px;top:437.20px;width:1.80px;height:1.80px;background:#4a4a4a;"></div>
<div class="r" style="left:486.80px;top:439.60px;width:1.80px;height:1.80px;background:#4a4a4a;"></div>
<div class="r" style="left:496.60px;top:437.40px;width:4.40px;height:3.80px;background:#9a9a9a;border-radius:.4px;"></div>
<div class="r" style="left:508.60px;top:437.60px;width:4.20px;height:3.00px;background:#ededed;border:.45px solid #7d7d7d;border-radius:.4px;"></div>
<div class="r" style="left:519.40px;top:439.00px;width:2.20px;height:0.50px;background:#666;"></div>
<div class="r" style="left:525.00px;top:439.00px;width:33.00px;height:0.50px;background:#8e8e8e;"></div>
<div class="r" style="left:543.00px;top:437.60px;width:3.20px;height:3.20px;background:#fdfdfd;border:.3px solid #aaa;border-radius:50%;"></div>
<div class="r" style="left:561.00px;top:439.00px;width:2.20px;height:0.50px;background:#555;"></div>
<div class="r" style="left:561.85px;top:438.15px;width:0.50px;height:2.20px;background:#555;"></div>
<svg class="tx" style="left:568px;top:434px" width="16" height="11"><text transform="translate(2.00 6.53) rotate(.05)" font-size="3.64" fill="#6d6d6d">162%</text></svg>
<div class="r" style="left:586.50px;top:437.40px;width:4.30px;height:3.80px;background:transparent;border:.45px solid #8a8a8a;"></div>
<div class="r" style="left:7.20px;top:433.40px;width:592.80px;height:1.60px;background:#ededed;"></div>
</body></html>
